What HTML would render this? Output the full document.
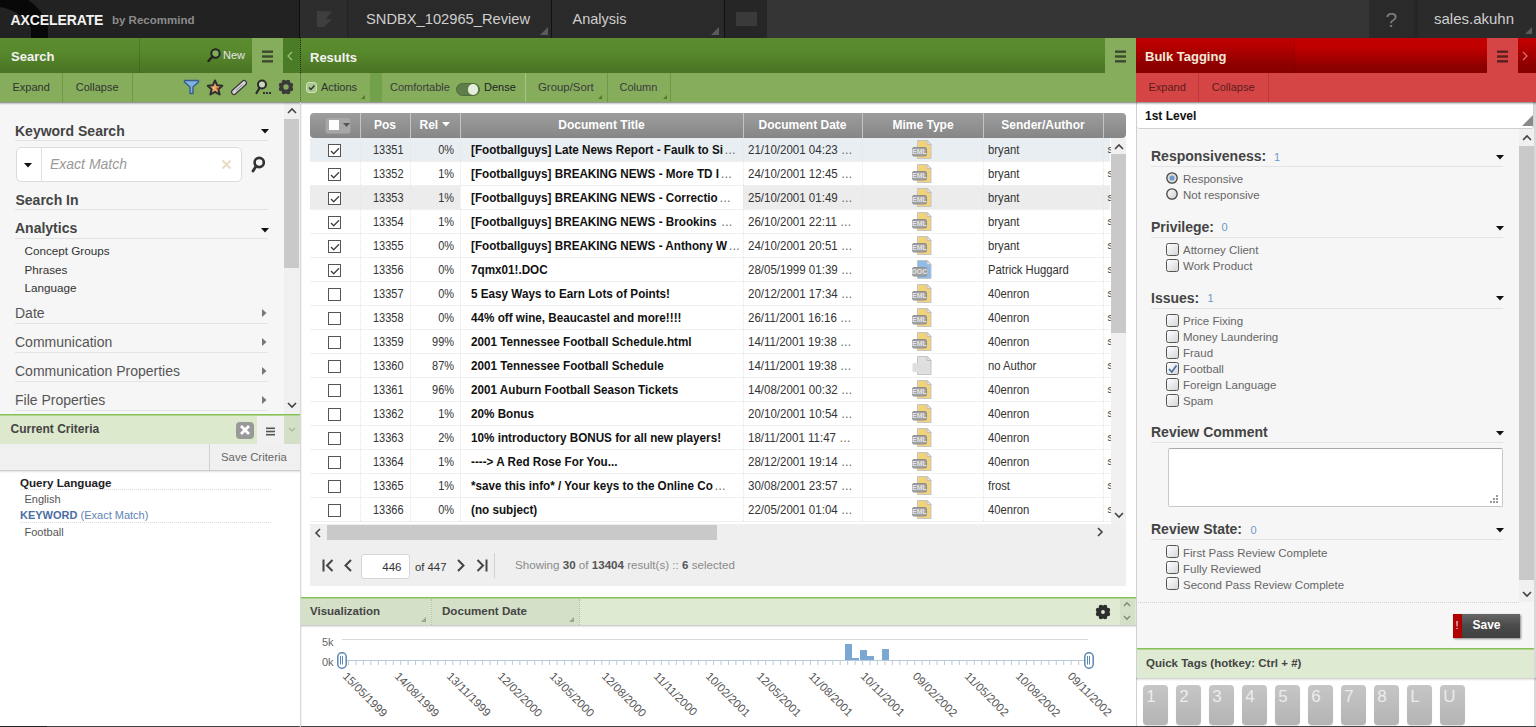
<!DOCTYPE html>
<html><head><meta charset="utf-8"><title>Axcelerate</title>
<style>
html,body{margin:0;padding:0}
body{width:1536px;height:727px;overflow:hidden;position:relative;background:#fff;font-family:"Liberation Sans",sans-serif;}
.a{position:absolute;box-sizing:border-box}
.t{white-space:nowrap}
.ghdr{background:linear-gradient(#5b8c2f,#588a2d 35%,#4a7323)}
.gtb{background:#85ad5c}
.rhdr{background:linear-gradient(#c20000,#c00000 12%,#8b0000 80%,#880000)}
.rtb{background:#d64545}
.cb{width:13px;height:13px;border:1.5px solid #555;background:#fff}
</style></head><body>
<div class="a" style="left:0px;top:0px;width:1536px;height:38px;background:#353535"></div>
<div class="a" style="left:0px;top:0px;width:299px;height:38px;background:#222"></div>
<svg class="a" style="left:0px;top:0px;" width="60" height="38" viewBox="0 0 60 38"><path d="M0,0 L28,0 Q43,9 48,27 L48,38 L31,38 L31,28 Q20,10 0,7 Z" fill="#080808"/></svg>
<div class="a t" style="left:10.5px;top:9.65px;font-size:14px;line-height:20px;color:#f2f2f2;font-weight:700;letter-spacing:-0.1px">AXCELERATE</div>
<div class="a t" style="left:112px;top:12.32px;font-size:11.5px;line-height:16px;color:#8c8c8c;font-weight:700;">by Recommind</div>
<div class="a" style="left:299px;top:0px;width:1px;height:38px;background:#0e0e0e"></div>
<div class="a" style="left:300px;top:0px;width:47px;height:38px;background:#2d2d2d"></div>
<svg class="a" style="left:316px;top:10px;" width="17" height="18" viewBox="0 0 17 18"><path d="M1,1 L16,1.5 L10,8.5 L16,9.5 L8,17 L1,17 Z" fill="#3e3e3e"/></svg>
<div class="a" style="left:347px;top:0px;width:1px;height:38px;background:#222"></div>
<div class="a" style="left:348px;top:0px;width:204px;height:38px;background:#2a2a2a"></div>
<div class="a t" style="left:366px;top:8.61px;font-size:14.7px;line-height:21px;color:#cfcfcf;font-weight:400;">SNDBX_102965_Review</div>
<svg class="a" style="left:540px;top:27px;" width="8" height="8" viewBox="0 0 8 8"><path d="M8,0 L8,8 L0,8 Z" fill="#5a5a5a"/></svg>
<div class="a" style="left:551px;top:0px;width:1px;height:38px;background:#111"></div>
<div class="a" style="left:552px;top:0px;width:172px;height:38px;background:#2a2a2a"></div>
<div class="a t" style="left:572.5px;top:9.18px;font-size:14.5px;line-height:20px;color:#cfcfcf;font-weight:400;">Analysis</div>
<svg class="a" style="left:711px;top:27px;" width="8" height="8" viewBox="0 0 8 8"><path d="M8,0 L8,8 L0,8 Z" fill="#5a5a5a"/></svg>
<div class="a" style="left:724px;top:0px;width:1px;height:38px;background:#111"></div>
<div class="a" style="left:725px;top:0px;width:42px;height:38px;background:#262626"></div>
<div class="a" style="left:736px;top:12px;width:21px;height:13.5px;background:#3a3a3a"></div>
<div class="a" style="left:1369px;top:0px;width:45px;height:38px;background:#2a2a2a"></div>
<div class="a t" style="left:1385.5px;top:5.42px;font-size:21px;line-height:29px;color:#7c7c7c;font-weight:400;">?</div>
<div class="a" style="left:1414px;top:0px;width:4px;height:38px;background:#262626"></div>
<div class="a" style="left:1418px;top:0px;width:118px;height:38px;background:#2b2b2b"></div>
<div class="a t" style="left:1434px;top:7.90px;font-size:15px;line-height:21px;color:#cfcfcf;font-weight:400;">sales.akuhn</div>
<svg class="a" style="left:1525px;top:27px;" width="7" height="7" viewBox="0 0 7 7"><path d="M7,0 L7,7 L0,7 Z" fill="#5a5a5a"/></svg>
<div class="a ghdr" style="left:0;top:38px;width:300px;height:35px"></div>
<div class="a" style="left:139px;top:38px;width:1px;height:35px;background:rgba(0,0,0,0.13)"></div>
<div class="a t" style="left:11px;top:47.80px;font-size:13px;line-height:18px;color:#f3f3f3;font-weight:700;">Search</div>
<svg class="a" style="left:207px;top:48px;" width="14" height="15" viewBox="0 0 14 15"><circle cx="8.5" cy="5.5" r="4.2" fill="#7fae5a" stroke="#222" stroke-width="2"/><path d="M5.5,8.5 L1.5,13" stroke="#222" stroke-width="2.4" stroke-linecap="round"/></svg>
<div class="a t" style="left:223px;top:47.69px;font-size:11px;line-height:15px;color:#e6e6e6;font-weight:400;">New</div>
<div class="a gtb" style="left:252px;top:38px;width:31px;height:35px"></div>
<svg class="a" style="left:262px;top:50px;" width="11" height="13" viewBox="0 0 11 13"><rect x="0" y="0.5" width="11" height="2.4" fill="#3d4a30"/><rect x="0" y="5.3" width="11" height="2.4" fill="#3d4a30"/><rect x="0" y="10.1" width="11" height="2.4" fill="#3d4a30"/></svg>
<div class="a" style="left:283px;top:38px;width:17px;height:35px;background:#4a7c27"></div>
<svg class="a" style="left:287px;top:51px;" width="6" height="10" viewBox="0 0 6 10"><path d="M5,1 L1,5 L5,9" fill="none" stroke="#9cc27a" stroke-width="1.2"/></svg>
<div class="a gtb" style="left:0;top:73px;width:300px;height:29px;"></div>
<div class="a t" style="left:12.5px;top:80.49px;font-size:11px;line-height:15px;color:#333;font-weight:400;">Expand</div>
<div class="a" style="left:62px;top:73px;width:1px;height:29px;background:#6e9a48"></div>
<div class="a t" style="left:75.8px;top:80.49px;font-size:11px;line-height:15px;color:#333;font-weight:400;">Collapse</div>
<div class="a" style="left:132px;top:73px;width:1px;height:29px;background:#6e9a48"></div>
<svg class="a" style="left:183px;top:79px;" width="17" height="16" viewBox="0 0 17 16"><path d="M1.5,1.5 L15.5,1.5 L15.5,3 L10,8 L10,14.5 L7,14.5 L7,8 L1.5,3 Z" fill="#7db3e2" stroke="#3b5d86" stroke-width="1.4" stroke-linejoin="round"/></svg>
<svg class="a" style="left:206px;top:79px;" width="18" height="17" viewBox="0 0 18 17"><path d="M9,1.5 L11.2,6.3 L16.3,6.8 L12.4,10.3 L13.6,15.5 L9,12.8 L4.4,15.5 L5.6,10.3 L1.7,6.8 L6.8,6.3 Z" fill="#e3a766" stroke="#2e2e2e" stroke-width="2" stroke-linejoin="round"/><circle cx="11.5" cy="9.5" r="1.1" fill="#e03030"/><circle cx="7.5" cy="9" r="0.9" fill="#f2d36a"/></svg>
<svg class="a" style="left:230px;top:79px;" width="18" height="17" viewBox="0 0 18 17"><path d="M4,13 L14,4" stroke="#3a3a3a" stroke-width="6" stroke-linecap="round"/><path d="M4,13 L14,4" stroke="#d4d4d4" stroke-width="3.6" stroke-linecap="round"/><path d="M6,11.5 L12.5,5.5" stroke="#8a8a8a" stroke-width="1"/></svg>
<svg class="a" style="left:255px;top:79px;" width="18" height="17" viewBox="0 0 18 17"><circle cx="7" cy="5.5" r="4" fill="#c8d8b8" stroke="#2a2a2a" stroke-width="2"/><path d="M4.5,9 L1.5,14" stroke="#2a2a2a" stroke-width="2.2" stroke-linecap="round"/><rect x="8" y="13" width="2" height="2" fill="#333"/><rect x="11" y="13" width="2" height="2" fill="#333"/><rect x="14" y="13" width="2" height="2" fill="#333"/></svg>
<svg class="a" style="left:278px;top:79px;" width="16" height="16" viewBox="0 0 16 16"><circle cx="8" cy="8" r="5.6" fill="#3a3a3a"/><circle cx="12.90" cy="10.03" r="2.3" fill="#3a3a3a"/><circle cx="10.03" cy="12.90" r="2.3" fill="#3a3a3a"/><circle cx="5.97" cy="12.90" r="2.3" fill="#3a3a3a"/><circle cx="3.10" cy="10.03" r="2.3" fill="#3a3a3a"/><circle cx="3.10" cy="5.97" r="2.3" fill="#3a3a3a"/><circle cx="5.97" cy="3.10" r="2.3" fill="#3a3a3a"/><circle cx="10.03" cy="3.10" r="2.3" fill="#3a3a3a"/><circle cx="12.90" cy="5.97" r="2.3" fill="#3a3a3a"/><circle cx="8" cy="8" r="2.7" fill="#85ad5c"/></svg>
<div class="a" style="left:0px;top:102px;width:300px;height:312px;background:#f6f6f6"></div>
<div class="a t" style="left:15px;top:121.15px;font-size:14px;line-height:20px;color:#444;font-weight:700;">Keyword Search</div>
<svg class="a" style="left:261px;top:129px;" width="8" height="5" viewBox="0 0 8 5"><path d="M0,0 L8,0 L4,4.5 Z" fill="#111"/></svg>
<div class="a" style="left:15px;top:140px;width:253px;height:1px;background:#e2e2e2"></div>
<div class="a" style="left:15.5px;top:146.5px;width:226px;height:35px;background:#fff;border:1px solid #dcdcdc;border-radius:5px"></div>
<div class="a" style="left:41px;top:147px;width:1px;height:34px;background:#e0e0e0"></div>
<svg class="a" style="left:24px;top:163px;" width="8" height="5" viewBox="0 0 8 5"><path d="M0,0 L8,0 L4,4.5 Z" fill="#111"/></svg>
<div class="a t" style="left:50px;top:153.65px;font-size:14px;line-height:20px;color:#999;font-weight:400;font-style:italic">Exact Match</div>
<svg class="a" style="left:221px;top:159px;" width="11" height="11" viewBox="0 0 11 11"><path d="M1.5,1.5 L9.5,9.5 M9.5,1.5 L1.5,9.5" stroke="#e9dcc2" stroke-width="2.1"/></svg>
<svg class="a" style="left:251px;top:156px;" width="14" height="17" viewBox="0 0 14 17"><circle cx="8.2" cy="6.5" r="4.6" fill="none" stroke="#333" stroke-width="2.6"/><path d="M5.2,10 L2,15" stroke="#333" stroke-width="2.8" stroke-linecap="round"/></svg>
<div class="a t" style="left:15.5px;top:190.45px;font-size:14px;line-height:20px;color:#444;font-weight:700;">Search In</div>
<div class="a" style="left:15px;top:209px;width:253px;height:1px;background:#e2e2e2"></div>
<div class="a t" style="left:15px;top:218.35px;font-size:14px;line-height:20px;color:#444;font-weight:700;">Analytics</div>
<svg class="a" style="left:261px;top:228px;" width="8" height="5" viewBox="0 0 8 5"><path d="M0,0 L8,0 L4,4.5 Z" fill="#111"/></svg>
<div class="a" style="left:15px;top:238px;width:253px;height:1px;background:#e2e2e2"></div>
<div class="a t" style="left:24.5px;top:243.35px;font-size:11.7px;line-height:16px;color:#333;font-weight:400;">Concept Groups</div>
<div class="a t" style="left:24.5px;top:261.85px;font-size:11.7px;line-height:16px;color:#333;font-weight:400;">Phrases</div>
<div class="a t" style="left:24.5px;top:280.15px;font-size:11.7px;line-height:16px;color:#333;font-weight:400;">Language</div>
<div class="a t" style="left:15px;top:303.25px;font-size:14px;line-height:20px;color:#555;font-weight:400;">Date</div>
<div class="a" style="left:15px;top:323px;width:253px;height:1px;background:#e4e4e4"></div>
<svg class="a" style="left:262px;top:309px;" width="5" height="8" viewBox="0 0 5 8"><path d="M0,0 L4.5,4 L0,8 Z" fill="#777"/></svg>
<div class="a t" style="left:15px;top:332.15px;font-size:14px;line-height:20px;color:#555;font-weight:400;">Communication</div>
<div class="a" style="left:15px;top:352px;width:253px;height:1px;background:#e4e4e4"></div>
<svg class="a" style="left:262px;top:338px;" width="5" height="8" viewBox="0 0 5 8"><path d="M0,0 L4.5,4 L0,8 Z" fill="#777"/></svg>
<div class="a t" style="left:15px;top:361.05px;font-size:14px;line-height:20px;color:#555;font-weight:400;">Communication Properties</div>
<div class="a" style="left:15px;top:381px;width:253px;height:1px;background:#e4e4e4"></div>
<svg class="a" style="left:262px;top:367px;" width="5" height="8" viewBox="0 0 5 8"><path d="M0,0 L4.5,4 L0,8 Z" fill="#777"/></svg>
<div class="a t" style="left:15px;top:389.95px;font-size:14px;line-height:20px;color:#555;font-weight:400;">File Properties</div>
<div class="a" style="left:15px;top:410px;width:253px;height:1px;background:#e4e4e4"></div>
<svg class="a" style="left:262px;top:396px;" width="5" height="8" viewBox="0 0 5 8"><path d="M0,0 L4.5,4 L0,8 Z" fill="#777"/></svg>
<div class="a" style="left:284px;top:102px;width:16px;height:312px;background:#f0f0f0"></div>
<svg class="a" style="left:287px;top:107px;" width="10" height="7" viewBox="0 0 10 7"><path d="M1,6 L5,2 L9,6" fill="none" stroke="#444" stroke-width="1.6"/></svg>
<div class="a" style="left:284px;top:119px;width:15px;height:149px;background:#c9c9c9"></div>
<svg class="a" style="left:287px;top:402px;" width="10" height="7" viewBox="0 0 10 7"><path d="M1,1 L5,5 L9,1" fill="none" stroke="#444" stroke-width="1.6"/></svg>
<div class="a" style="left:0px;top:414px;width:300px;height:1px;background:#86bf55"></div>
<div class="a" style="left:0px;top:415px;width:300px;height:1px;background:#b2d492"></div>
<div class="a" style="left:0px;top:416px;width:300px;height:28px;background:#dce9cd"></div>
<div class="a t" style="left:10.5px;top:420.74px;font-size:12px;line-height:17px;color:#444;font-weight:700;">Current Criteria</div>
<div class="a" style="left:236px;top:421.5px;width:18px;height:17.5px;background:#999;border-radius:4px"></div>
<svg class="a" style="left:239px;top:424px;" width="12" height="12" viewBox="0 0 12 12"><path d="M2,2 L10,10 M10,2 L2,10" stroke="#fff" stroke-width="2.8"/></svg>
<div class="a" style="left:257px;top:416px;width:27px;height:28px;background:#f1f1f1"></div>
<svg class="a" style="left:266px;top:427px;" width="9" height="9" viewBox="0 0 9 9"><rect x="0" y="0.5" width="9" height="1.6" fill="#555"/><rect x="0" y="3.7" width="9" height="1.6" fill="#555"/><rect x="0" y="6.9" width="9" height="1.6" fill="#555"/></svg>
<div class="a" style="left:284px;top:416px;width:16px;height:28px;background:#d3dfc6"></div>
<svg class="a" style="left:288px;top:427px;" width="8" height="6" viewBox="0 0 8 6"><path d="M1,1 L4,4 L7,1" fill="none" stroke="#aab49e" stroke-width="1.2"/></svg>
<div class="a" style="left:0;top:444px;width:300px;height:26px;background:#f0f0f0"></div>
<div class="a" style="left:209px;top:444px;width:1px;height:26px;background:#d0d0d0"></div>
<div class="a t" style="left:221px;top:449.05px;font-size:11.4px;line-height:16px;color:#666;font-weight:400;">Save Criteria</div>
<div class="a" style="left:0px;top:470px;width:300px;height:256px;background:#fff"></div>
<div class="a t" style="left:20px;top:474.58px;font-size:11.6px;line-height:16px;color:#222;font-weight:700;">Query Language</div>
<div class="a" style="left:20px;top:489px;width:251px;height:1px;border-top:1px dotted #d8d8d8"></div>
<div class="a t" style="left:24.5px;top:491.89px;font-size:11px;line-height:15px;color:#555;font-weight:400;">English</div>
<div class="a t" style="left:20px;top:507.89px;font-size:11px;line-height:15px;color:#555;font-weight:400;"><b style="color:#4a6ea3">KEYWORD</b> <span style="color:#6384b3">(Exact Match)</span></div>
<div class="a" style="left:20px;top:522px;width:251px;height:1px;border-top:1px dotted #d8d8d8"></div>
<div class="a t" style="left:24.5px;top:524.69px;font-size:11px;line-height:15px;color:#555;font-weight:400;">Football</div>
<div class="a" style="left:300px;top:102px;width:1px;height:625px;background:#dadada"></div>
<div class="a" style="left:301px;top:102px;width:1px;height:625px;background:#f2f2f2"></div>
<div class="a ghdr" style="left:301px;top:38px;width:804px;height:35px"></div>
<div class="a" style="left:300px;top:38px;width:1px;height:35px;background:#4f7f2a"></div>
<div class="a" style="left:300px;top:73px;width:1px;height:29px;background:#6f9a4a"></div>
<div class="a" style="left:300px;top:38px;width:1px;height:35px;border-left:1px dotted #1f2a18"></div>
<div class="a" style="left:300px;top:73px;width:1px;height:29px;border-left:1px dotted #54743f"></div>
<div class="a t" style="left:310px;top:48.70px;font-size:13px;line-height:18px;color:#f3f3f3;font-weight:700;">Results</div>
<div class="a gtb" style="left:1105px;top:38px;width:31px;height:35px"></div>
<svg class="a" style="left:1115px;top:50px;" width="11" height="13" viewBox="0 0 11 13"><rect x="0" y="0.5" width="11" height="2.4" fill="#3d4a30"/><rect x="0" y="5.3" width="11" height="2.4" fill="#3d4a30"/><rect x="0" y="10.1" width="11" height="2.4" fill="#3d4a30"/></svg>
<div class="a gtb" style="left:301px;top:73px;width:835px;height:29px;"></div>
<div class="a" style="left:306px;top:82px;width:11px;height:11px;background:#a9c98e;border:1px solid #cfe0c0;border-radius:3px"></div>
<svg class="a" style="left:307px;top:83px;" width="9" height="9" viewBox="0 0 9 9"><path d="M2,4.5 L4,6.5 L7.5,2.5" fill="none" stroke="#333" stroke-width="1.5"/></svg>
<div class="a t" style="left:321px;top:79.69px;font-size:11px;line-height:15px;color:#333;font-weight:400;">Actions</div>
<svg class="a" style="left:361px;top:95px;" width="4" height="4" viewBox="0 0 4 4"><path d="M4,0 L4,4 L0,4 Z" fill="#4f7a2c"/></svg>
<div class="a" style="left:370px;top:73px;width:12px;height:29px;background:#73a04a"></div>
<div class="a t" style="left:390px;top:79.69px;font-size:11px;line-height:15px;color:#3b3b3b;font-weight:400;">Comfortable</div>
<div class="a" style="left:456px;top:82.5px;width:24px;height:13px;background:#5f7d48;border-radius:7px;border:1px solid #4e6b3a"></div>
<div class="a" style="left:467.5px;top:84px;width:10.5px;height:10.5px;background:#e6eedd;border-radius:6px"></div>
<div class="a t" style="left:484px;top:79.69px;font-size:11px;line-height:15px;color:#222;font-weight:400;">Dense</div>
<div class="a" style="left:525px;top:73px;width:1px;height:29px;background:#a5c688"></div>
<div class="a t" style="left:538px;top:79.05px;font-size:11.4px;line-height:16px;color:#3b3b3b;font-weight:400;">Group/Sort</div>
<svg class="a" style="left:598px;top:95px;" width="4" height="4" viewBox="0 0 4 4"><path d="M4,0 L4,4 L0,4 Z" fill="#4f7a2c"/></svg>
<div class="a" style="left:607px;top:73px;width:1px;height:29px;background:#6e9a48"></div>
<div class="a t" style="left:619.5px;top:79.69px;font-size:11px;line-height:15px;color:#3b3b3b;font-weight:400;">Column</div>
<svg class="a" style="left:663px;top:95px;" width="4" height="4" viewBox="0 0 4 4"><path d="M4,0 L4,4 L0,4 Z" fill="#4f7a2c"/></svg>
<div class="a" style="left:670px;top:73px;width:1px;height:29px;background:#6e9a48"></div>
<div class="a" style="left:310px;top:113px;width:816px;height:25px;background:linear-gradient(#9d9d9d,#868686);border-radius:4px"></div>
<div class="a" style="left:360px;top:113px;width:1px;height:25px;background:#c4c4c4"></div>
<div class="a" style="left:410px;top:113px;width:1px;height:25px;background:#c4c4c4"></div>
<div class="a" style="left:460px;top:113px;width:1px;height:25px;background:#c4c4c4"></div>
<div class="a" style="left:743px;top:113px;width:1px;height:25px;background:#c4c4c4"></div>
<div class="a" style="left:862px;top:113px;width:1px;height:25px;background:#c4c4c4"></div>
<div class="a" style="left:983px;top:113px;width:1px;height:25px;background:#c4c4c4"></div>
<div class="a" style="left:1103px;top:113px;width:1px;height:25px;background:#c4c4c4"></div>
<div class="a" style="left:325px;top:117px;width:26px;height:17px;background:#a7a7a7;border:1px solid #999;border-radius:3px"></div>
<div class="a" style="left:329px;top:120px;width:10px;height:10px;background:#fff"></div>
<svg class="a" style="left:343px;top:123px;" width="7" height="5" viewBox="0 0 7 5"><path d="M0,0 L7,0 L3.5,4 Z" fill="#555"/></svg>
<div class="a t" style="left:374px;top:116.64px;font-size:12px;line-height:17px;color:#fff;font-weight:700;">Pos</div>
<div class="a t" style="left:419.5px;top:116.64px;font-size:12px;line-height:17px;color:#fff;font-weight:700;">Rel</div>
<svg class="a" style="left:442px;top:122px;" width="8" height="5" viewBox="0 0 8 5"><path d="M0,0 L8,0 L4,4.5 Z" fill="#fff"/></svg>
<div class="a t" style="left:301.5px;width:600px;text-align:center;top:116.64px;font-size:12px;line-height:17px;color:#fff;font-weight:700;">Document Title</div>
<div class="a t" style="left:502.5px;width:600px;text-align:center;top:116.64px;font-size:12px;line-height:17px;color:#fff;font-weight:700;">Document Date</div>
<div class="a t" style="left:623px;width:600px;text-align:center;top:116.64px;font-size:12px;line-height:17px;color:#fff;font-weight:700;">Mime Type</div>
<div class="a t" style="left:743px;width:600px;text-align:center;top:116.64px;font-size:12px;line-height:17px;color:#fff;font-weight:700;">Sender/Author</div>
<div class="a" style="left:310px;top:138px;width:800px;height:24px;background:#e9eef3"></div>
<div class="a" style="left:310px;top:161px;width:800px;height:1px;background:#f0f0f0"></div>
<div class="a" style="left:360px;top:138px;width:1px;height:23px;border-left:1px dotted #e6e6e6"></div>
<div class="a" style="left:410px;top:138px;width:1px;height:23px;border-left:1px dotted #e6e6e6"></div>
<div class="a" style="left:460px;top:138px;width:1px;height:23px;border-left:1px dotted #e6e6e6"></div>
<div class="a" style="left:743px;top:138px;width:1px;height:23px;border-left:1px dotted #e6e6e6"></div>
<div class="a" style="left:862px;top:138px;width:1px;height:23px;border-left:1px dotted #e6e6e6"></div>
<div class="a" style="left:983px;top:138px;width:1px;height:23px;border-left:1px dotted #e6e6e6"></div>
<div class="a" style="left:1103px;top:138px;width:1px;height:23px;border-left:1px dotted #e6e6e6"></div>
<div class="a cb" style="left:328px;top:144px"></div>
<svg class="a" style="left:330px;top:146px;" width="10" height="10" viewBox="0 0 10 10"><path d="M1,5 L3.7,7.8 L9,2.3" fill="none" stroke="#444" stroke-width="1.4"/></svg>
<div class="a t" style="left:372.5px;top:141.50px;font-size:12.4px;line-height:17px;color:#333;font-weight:400;transform:scaleX(0.885);transform-origin:0 0">13351</div>
<div class="a t" style="left:154px;width:300px;text-align:right;top:141.50px;font-size:12.4px;line-height:17px;color:#333;font-weight:400;transform:scaleX(0.885);transform-origin:100% 0">0%</div>
<div class="a t" style="left:470.5px;top:140.97px;font-size:12.5px;line-height:18px;color:#111;font-weight:700;transform:scaleX(0.935);transform-origin:0 0">[Footballguys] Late News Report - Faulk to Si<span style="font-weight:400;color:#666;margin-left:1.5px">…</span></div>
<div class="a t" style="left:747.5px;top:141.50px;font-size:12.4px;line-height:17px;color:#333;font-weight:400;transform:scaleX(0.93);transform-origin:0 0">21/10/2001 04:23 <span style="color:#666">…</span></div>
<svg class="a" style="left:912px;top:140px" width="20" height="20" viewBox="0 0 20 20"><path d="M5.5,0.5 L15,0.5 L19,4.5 L19,18.5 L5.5,18.5 Z" fill="#f2d27a" stroke="#c4c4c4" stroke-width="1"/><path d="M15,0.5 L15,4.5 L19,4.5 Z" fill="#e6e6e6" stroke="#b8b8b8" stroke-width="0.8"/><rect x="0.5" y="7.5" width="14" height="8.5" rx="1.5" fill="#a3a3a3" stroke="#8e8e8e" stroke-width="1"/><text x="7.5" y="14.3" font-size="7" font-weight="700" text-anchor="middle" fill="#e4e4e4" font-family="Liberation Sans">EML</text></svg>
<div class="a t" style="left:987.5px;top:141.50px;font-size:12.4px;line-height:17px;color:#333;font-weight:400;transform:scaleX(0.91);transform-origin:0 0">bryant</div>
<div class="a" style="left:1107px;top:138px;width:4px;height:23px;overflow:hidden"><div class="a t" style="left:0.5px;top:4px;font-size:11px;line-height:15px;color:#444">s</div></div>
<div class="a" style="left:310px;top:185px;width:800px;height:1px;background:#f0f0f0"></div>
<div class="a" style="left:360px;top:162px;width:1px;height:23px;border-left:1px dotted #e6e6e6"></div>
<div class="a" style="left:410px;top:162px;width:1px;height:23px;border-left:1px dotted #e6e6e6"></div>
<div class="a" style="left:460px;top:162px;width:1px;height:23px;border-left:1px dotted #e6e6e6"></div>
<div class="a" style="left:743px;top:162px;width:1px;height:23px;border-left:1px dotted #e6e6e6"></div>
<div class="a" style="left:862px;top:162px;width:1px;height:23px;border-left:1px dotted #e6e6e6"></div>
<div class="a" style="left:983px;top:162px;width:1px;height:23px;border-left:1px dotted #e6e6e6"></div>
<div class="a" style="left:1103px;top:162px;width:1px;height:23px;border-left:1px dotted #e6e6e6"></div>
<div class="a cb" style="left:328px;top:168px"></div>
<svg class="a" style="left:330px;top:170px;" width="10" height="10" viewBox="0 0 10 10"><path d="M1,5 L3.7,7.8 L9,2.3" fill="none" stroke="#444" stroke-width="1.4"/></svg>
<div class="a t" style="left:372.5px;top:165.50px;font-size:12.4px;line-height:17px;color:#333;font-weight:400;transform:scaleX(0.885);transform-origin:0 0">13352</div>
<div class="a t" style="left:154px;width:300px;text-align:right;top:165.50px;font-size:12.4px;line-height:17px;color:#333;font-weight:400;transform:scaleX(0.885);transform-origin:100% 0">1%</div>
<div class="a t" style="left:470.5px;top:164.97px;font-size:12.5px;line-height:18px;color:#111;font-weight:700;transform:scaleX(0.935);transform-origin:0 0">[Footballguys] BREAKING NEWS - More TD I<span style="font-weight:400;color:#666;margin-left:1.5px">…</span></div>
<div class="a t" style="left:747.5px;top:165.50px;font-size:12.4px;line-height:17px;color:#333;font-weight:400;transform:scaleX(0.93);transform-origin:0 0">24/10/2001 12:45 <span style="color:#666">…</span></div>
<svg class="a" style="left:912px;top:164px" width="20" height="20" viewBox="0 0 20 20"><path d="M5.5,0.5 L15,0.5 L19,4.5 L19,18.5 L5.5,18.5 Z" fill="#f2d27a" stroke="#c4c4c4" stroke-width="1"/><path d="M15,0.5 L15,4.5 L19,4.5 Z" fill="#e6e6e6" stroke="#b8b8b8" stroke-width="0.8"/><rect x="0.5" y="7.5" width="14" height="8.5" rx="1.5" fill="#a3a3a3" stroke="#8e8e8e" stroke-width="1"/><text x="7.5" y="14.3" font-size="7" font-weight="700" text-anchor="middle" fill="#e4e4e4" font-family="Liberation Sans">EML</text></svg>
<div class="a t" style="left:987.5px;top:165.50px;font-size:12.4px;line-height:17px;color:#333;font-weight:400;transform:scaleX(0.91);transform-origin:0 0">bryant</div>
<div class="a" style="left:1107px;top:162px;width:4px;height:23px;overflow:hidden"><div class="a t" style="left:0.5px;top:4px;font-size:11px;line-height:15px;color:#444">s</div></div>
<div class="a" style="left:310px;top:186px;width:150px;height:24px;background:#ececec"></div>
<div class="a" style="left:743px;top:186px;width:367px;height:24px;background:#ececec"></div>
<div class="a" style="left:310px;top:209px;width:800px;height:1px;background:#f0f0f0"></div>
<div class="a" style="left:360px;top:186px;width:1px;height:23px;border-left:1px dotted #e6e6e6"></div>
<div class="a" style="left:410px;top:186px;width:1px;height:23px;border-left:1px dotted #e6e6e6"></div>
<div class="a" style="left:460px;top:186px;width:1px;height:23px;border-left:1px dotted #e6e6e6"></div>
<div class="a" style="left:743px;top:186px;width:1px;height:23px;border-left:1px dotted #e6e6e6"></div>
<div class="a" style="left:862px;top:186px;width:1px;height:23px;border-left:1px dotted #e6e6e6"></div>
<div class="a" style="left:983px;top:186px;width:1px;height:23px;border-left:1px dotted #e6e6e6"></div>
<div class="a" style="left:1103px;top:186px;width:1px;height:23px;border-left:1px dotted #e6e6e6"></div>
<div class="a cb" style="left:328px;top:192px"></div>
<svg class="a" style="left:330px;top:194px;" width="10" height="10" viewBox="0 0 10 10"><path d="M1,5 L3.7,7.8 L9,2.3" fill="none" stroke="#444" stroke-width="1.4"/></svg>
<div class="a t" style="left:372.5px;top:189.50px;font-size:12.4px;line-height:17px;color:#333;font-weight:400;transform:scaleX(0.885);transform-origin:0 0">13353</div>
<div class="a t" style="left:154px;width:300px;text-align:right;top:189.50px;font-size:12.4px;line-height:17px;color:#333;font-weight:400;transform:scaleX(0.885);transform-origin:100% 0">1%</div>
<div class="a t" style="left:470.5px;top:188.97px;font-size:12.5px;line-height:18px;color:#111;font-weight:700;transform:scaleX(0.935);transform-origin:0 0">[Footballguys] BREAKING NEWS - Correctio<span style="font-weight:400;color:#666;margin-left:1.5px">…</span></div>
<div class="a t" style="left:747.5px;top:189.50px;font-size:12.4px;line-height:17px;color:#333;font-weight:400;transform:scaleX(0.93);transform-origin:0 0">25/10/2001 01:49 <span style="color:#666">…</span></div>
<svg class="a" style="left:912px;top:188px" width="20" height="20" viewBox="0 0 20 20"><path d="M5.5,0.5 L15,0.5 L19,4.5 L19,18.5 L5.5,18.5 Z" fill="#f2d27a" stroke="#c4c4c4" stroke-width="1"/><path d="M15,0.5 L15,4.5 L19,4.5 Z" fill="#e6e6e6" stroke="#b8b8b8" stroke-width="0.8"/><rect x="0.5" y="7.5" width="14" height="8.5" rx="1.5" fill="#a3a3a3" stroke="#8e8e8e" stroke-width="1"/><text x="7.5" y="14.3" font-size="7" font-weight="700" text-anchor="middle" fill="#e4e4e4" font-family="Liberation Sans">EML</text></svg>
<div class="a t" style="left:987.5px;top:189.50px;font-size:12.4px;line-height:17px;color:#333;font-weight:400;transform:scaleX(0.91);transform-origin:0 0">bryant</div>
<div class="a" style="left:1107px;top:186px;width:4px;height:23px;overflow:hidden"><div class="a t" style="left:0.5px;top:4px;font-size:11px;line-height:15px;color:#444">s</div></div>
<div class="a" style="left:310px;top:233px;width:800px;height:1px;background:#f0f0f0"></div>
<div class="a" style="left:360px;top:210px;width:1px;height:23px;border-left:1px dotted #e6e6e6"></div>
<div class="a" style="left:410px;top:210px;width:1px;height:23px;border-left:1px dotted #e6e6e6"></div>
<div class="a" style="left:460px;top:210px;width:1px;height:23px;border-left:1px dotted #e6e6e6"></div>
<div class="a" style="left:743px;top:210px;width:1px;height:23px;border-left:1px dotted #e6e6e6"></div>
<div class="a" style="left:862px;top:210px;width:1px;height:23px;border-left:1px dotted #e6e6e6"></div>
<div class="a" style="left:983px;top:210px;width:1px;height:23px;border-left:1px dotted #e6e6e6"></div>
<div class="a" style="left:1103px;top:210px;width:1px;height:23px;border-left:1px dotted #e6e6e6"></div>
<div class="a cb" style="left:328px;top:216px"></div>
<svg class="a" style="left:330px;top:218px;" width="10" height="10" viewBox="0 0 10 10"><path d="M1,5 L3.7,7.8 L9,2.3" fill="none" stroke="#444" stroke-width="1.4"/></svg>
<div class="a t" style="left:372.5px;top:213.50px;font-size:12.4px;line-height:17px;color:#333;font-weight:400;transform:scaleX(0.885);transform-origin:0 0">13354</div>
<div class="a t" style="left:154px;width:300px;text-align:right;top:213.50px;font-size:12.4px;line-height:17px;color:#333;font-weight:400;transform:scaleX(0.885);transform-origin:100% 0">1%</div>
<div class="a t" style="left:470.5px;top:212.97px;font-size:12.5px;line-height:18px;color:#111;font-weight:700;transform:scaleX(0.935);transform-origin:0 0">[Footballguys] BREAKING NEWS - Brookins <span style="font-weight:400;color:#666;margin-left:1.5px">…</span></div>
<div class="a t" style="left:747.5px;top:213.50px;font-size:12.4px;line-height:17px;color:#333;font-weight:400;transform:scaleX(0.93);transform-origin:0 0">26/10/2001 22:11 <span style="color:#666">…</span></div>
<svg class="a" style="left:912px;top:212px" width="20" height="20" viewBox="0 0 20 20"><path d="M5.5,0.5 L15,0.5 L19,4.5 L19,18.5 L5.5,18.5 Z" fill="#f2d27a" stroke="#c4c4c4" stroke-width="1"/><path d="M15,0.5 L15,4.5 L19,4.5 Z" fill="#e6e6e6" stroke="#b8b8b8" stroke-width="0.8"/><rect x="0.5" y="7.5" width="14" height="8.5" rx="1.5" fill="#a3a3a3" stroke="#8e8e8e" stroke-width="1"/><text x="7.5" y="14.3" font-size="7" font-weight="700" text-anchor="middle" fill="#e4e4e4" font-family="Liberation Sans">EML</text></svg>
<div class="a t" style="left:987.5px;top:213.50px;font-size:12.4px;line-height:17px;color:#333;font-weight:400;transform:scaleX(0.91);transform-origin:0 0">bryant</div>
<div class="a" style="left:1107px;top:210px;width:4px;height:23px;overflow:hidden"><div class="a t" style="left:0.5px;top:4px;font-size:11px;line-height:15px;color:#444">s</div></div>
<div class="a" style="left:310px;top:257px;width:800px;height:1px;background:#f0f0f0"></div>
<div class="a" style="left:360px;top:234px;width:1px;height:23px;border-left:1px dotted #e6e6e6"></div>
<div class="a" style="left:410px;top:234px;width:1px;height:23px;border-left:1px dotted #e6e6e6"></div>
<div class="a" style="left:460px;top:234px;width:1px;height:23px;border-left:1px dotted #e6e6e6"></div>
<div class="a" style="left:743px;top:234px;width:1px;height:23px;border-left:1px dotted #e6e6e6"></div>
<div class="a" style="left:862px;top:234px;width:1px;height:23px;border-left:1px dotted #e6e6e6"></div>
<div class="a" style="left:983px;top:234px;width:1px;height:23px;border-left:1px dotted #e6e6e6"></div>
<div class="a" style="left:1103px;top:234px;width:1px;height:23px;border-left:1px dotted #e6e6e6"></div>
<div class="a cb" style="left:328px;top:240px"></div>
<svg class="a" style="left:330px;top:242px;" width="10" height="10" viewBox="0 0 10 10"><path d="M1,5 L3.7,7.8 L9,2.3" fill="none" stroke="#444" stroke-width="1.4"/></svg>
<div class="a t" style="left:372.5px;top:237.50px;font-size:12.4px;line-height:17px;color:#333;font-weight:400;transform:scaleX(0.885);transform-origin:0 0">13355</div>
<div class="a t" style="left:154px;width:300px;text-align:right;top:237.50px;font-size:12.4px;line-height:17px;color:#333;font-weight:400;transform:scaleX(0.885);transform-origin:100% 0">0%</div>
<div class="a t" style="left:470.5px;top:236.97px;font-size:12.5px;line-height:18px;color:#111;font-weight:700;transform:scaleX(0.935);transform-origin:0 0">[Footballguys] BREAKING NEWS - Anthony W<span style="font-weight:400;color:#666;margin-left:1.5px">…</span></div>
<div class="a t" style="left:747.5px;top:237.50px;font-size:12.4px;line-height:17px;color:#333;font-weight:400;transform:scaleX(0.93);transform-origin:0 0">24/10/2001 20:51 <span style="color:#666">…</span></div>
<svg class="a" style="left:912px;top:236px" width="20" height="20" viewBox="0 0 20 20"><path d="M5.5,0.5 L15,0.5 L19,4.5 L19,18.5 L5.5,18.5 Z" fill="#f2d27a" stroke="#c4c4c4" stroke-width="1"/><path d="M15,0.5 L15,4.5 L19,4.5 Z" fill="#e6e6e6" stroke="#b8b8b8" stroke-width="0.8"/><rect x="0.5" y="7.5" width="14" height="8.5" rx="1.5" fill="#a3a3a3" stroke="#8e8e8e" stroke-width="1"/><text x="7.5" y="14.3" font-size="7" font-weight="700" text-anchor="middle" fill="#e4e4e4" font-family="Liberation Sans">EML</text></svg>
<div class="a t" style="left:987.5px;top:237.50px;font-size:12.4px;line-height:17px;color:#333;font-weight:400;transform:scaleX(0.91);transform-origin:0 0">bryant</div>
<div class="a" style="left:1107px;top:234px;width:4px;height:23px;overflow:hidden"><div class="a t" style="left:0.5px;top:4px;font-size:11px;line-height:15px;color:#444">s</div></div>
<div class="a" style="left:310px;top:281px;width:800px;height:1px;background:#f0f0f0"></div>
<div class="a" style="left:360px;top:258px;width:1px;height:23px;border-left:1px dotted #e6e6e6"></div>
<div class="a" style="left:410px;top:258px;width:1px;height:23px;border-left:1px dotted #e6e6e6"></div>
<div class="a" style="left:460px;top:258px;width:1px;height:23px;border-left:1px dotted #e6e6e6"></div>
<div class="a" style="left:743px;top:258px;width:1px;height:23px;border-left:1px dotted #e6e6e6"></div>
<div class="a" style="left:862px;top:258px;width:1px;height:23px;border-left:1px dotted #e6e6e6"></div>
<div class="a" style="left:983px;top:258px;width:1px;height:23px;border-left:1px dotted #e6e6e6"></div>
<div class="a" style="left:1103px;top:258px;width:1px;height:23px;border-left:1px dotted #e6e6e6"></div>
<div class="a cb" style="left:328px;top:264px"></div>
<svg class="a" style="left:330px;top:266px;" width="10" height="10" viewBox="0 0 10 10"><path d="M1,5 L3.7,7.8 L9,2.3" fill="none" stroke="#444" stroke-width="1.4"/></svg>
<div class="a t" style="left:372.5px;top:261.50px;font-size:12.4px;line-height:17px;color:#333;font-weight:400;transform:scaleX(0.885);transform-origin:0 0">13356</div>
<div class="a t" style="left:154px;width:300px;text-align:right;top:261.50px;font-size:12.4px;line-height:17px;color:#333;font-weight:400;transform:scaleX(0.885);transform-origin:100% 0">0%</div>
<div class="a t" style="left:470.5px;top:260.97px;font-size:12.5px;line-height:18px;color:#111;font-weight:700;transform:scaleX(0.935);transform-origin:0 0">7qmx01!.DOC</div>
<div class="a t" style="left:747.5px;top:261.50px;font-size:12.4px;line-height:17px;color:#333;font-weight:400;transform:scaleX(0.93);transform-origin:0 0">28/05/1999 01:39 <span style="color:#666">…</span></div>
<svg class="a" style="left:912px;top:260px" width="20" height="20" viewBox="0 0 20 20"><path d="M5.5,0.5 L15,0.5 L19,4.5 L19,18.5 L5.5,18.5 Z" fill="#8fbbe8" stroke="#c4c4c4" stroke-width="1"/><path d="M15,0.5 L15,4.5 L19,4.5 Z" fill="#e6e6e6" stroke="#b8b8b8" stroke-width="0.8"/><rect x="0.5" y="7.5" width="14" height="8.5" rx="1.5" fill="#a3a3a3" stroke="#8e8e8e" stroke-width="1"/><text x="7.5" y="14.3" font-size="7" font-weight="700" text-anchor="middle" fill="#e4e4e4" font-family="Liberation Sans">DOC</text></svg>
<div class="a t" style="left:987.5px;top:261.50px;font-size:12.4px;line-height:17px;color:#333;font-weight:400;transform:scaleX(0.91);transform-origin:0 0">Patrick Huggard</div>
<div class="a" style="left:1107px;top:258px;width:4px;height:23px;overflow:hidden"><div class="a t" style="left:0.5px;top:4px;font-size:11px;line-height:15px;color:#444">s</div></div>
<div class="a" style="left:310px;top:305px;width:800px;height:1px;background:#f0f0f0"></div>
<div class="a" style="left:360px;top:282px;width:1px;height:23px;border-left:1px dotted #e6e6e6"></div>
<div class="a" style="left:410px;top:282px;width:1px;height:23px;border-left:1px dotted #e6e6e6"></div>
<div class="a" style="left:460px;top:282px;width:1px;height:23px;border-left:1px dotted #e6e6e6"></div>
<div class="a" style="left:743px;top:282px;width:1px;height:23px;border-left:1px dotted #e6e6e6"></div>
<div class="a" style="left:862px;top:282px;width:1px;height:23px;border-left:1px dotted #e6e6e6"></div>
<div class="a" style="left:983px;top:282px;width:1px;height:23px;border-left:1px dotted #e6e6e6"></div>
<div class="a" style="left:1103px;top:282px;width:1px;height:23px;border-left:1px dotted #e6e6e6"></div>
<div class="a cb" style="left:328px;top:288px"></div>
<div class="a t" style="left:372.5px;top:285.50px;font-size:12.4px;line-height:17px;color:#333;font-weight:400;transform:scaleX(0.885);transform-origin:0 0">13357</div>
<div class="a t" style="left:154px;width:300px;text-align:right;top:285.50px;font-size:12.4px;line-height:17px;color:#333;font-weight:400;transform:scaleX(0.885);transform-origin:100% 0">0%</div>
<div class="a t" style="left:470.5px;top:284.97px;font-size:12.5px;line-height:18px;color:#111;font-weight:700;transform:scaleX(0.935);transform-origin:0 0">5 Easy Ways to Earn Lots of Points!</div>
<div class="a t" style="left:747.5px;top:285.50px;font-size:12.4px;line-height:17px;color:#333;font-weight:400;transform:scaleX(0.93);transform-origin:0 0">20/12/2001 17:34 <span style="color:#666">…</span></div>
<svg class="a" style="left:912px;top:284px" width="20" height="20" viewBox="0 0 20 20"><path d="M5.5,0.5 L15,0.5 L19,4.5 L19,18.5 L5.5,18.5 Z" fill="#f2d27a" stroke="#c4c4c4" stroke-width="1"/><path d="M15,0.5 L15,4.5 L19,4.5 Z" fill="#e6e6e6" stroke="#b8b8b8" stroke-width="0.8"/><rect x="0.5" y="7.5" width="14" height="8.5" rx="1.5" fill="#a3a3a3" stroke="#8e8e8e" stroke-width="1"/><text x="7.5" y="14.3" font-size="7" font-weight="700" text-anchor="middle" fill="#e4e4e4" font-family="Liberation Sans">EML</text></svg>
<div class="a t" style="left:987.5px;top:285.50px;font-size:12.4px;line-height:17px;color:#333;font-weight:400;transform:scaleX(0.91);transform-origin:0 0">40enron</div>
<div class="a" style="left:1107px;top:282px;width:4px;height:23px;overflow:hidden"><div class="a t" style="left:0.5px;top:4px;font-size:11px;line-height:15px;color:#444">s</div></div>
<div class="a" style="left:310px;top:329px;width:800px;height:1px;background:#f0f0f0"></div>
<div class="a" style="left:360px;top:306px;width:1px;height:23px;border-left:1px dotted #e6e6e6"></div>
<div class="a" style="left:410px;top:306px;width:1px;height:23px;border-left:1px dotted #e6e6e6"></div>
<div class="a" style="left:460px;top:306px;width:1px;height:23px;border-left:1px dotted #e6e6e6"></div>
<div class="a" style="left:743px;top:306px;width:1px;height:23px;border-left:1px dotted #e6e6e6"></div>
<div class="a" style="left:862px;top:306px;width:1px;height:23px;border-left:1px dotted #e6e6e6"></div>
<div class="a" style="left:983px;top:306px;width:1px;height:23px;border-left:1px dotted #e6e6e6"></div>
<div class="a" style="left:1103px;top:306px;width:1px;height:23px;border-left:1px dotted #e6e6e6"></div>
<div class="a cb" style="left:328px;top:312px"></div>
<div class="a t" style="left:372.5px;top:309.50px;font-size:12.4px;line-height:17px;color:#333;font-weight:400;transform:scaleX(0.885);transform-origin:0 0">13358</div>
<div class="a t" style="left:154px;width:300px;text-align:right;top:309.50px;font-size:12.4px;line-height:17px;color:#333;font-weight:400;transform:scaleX(0.885);transform-origin:100% 0">0%</div>
<div class="a t" style="left:470.5px;top:308.97px;font-size:12.5px;line-height:18px;color:#111;font-weight:700;transform:scaleX(0.935);transform-origin:0 0">44% off wine, Beaucastel and more!!!!</div>
<div class="a t" style="left:747.5px;top:309.50px;font-size:12.4px;line-height:17px;color:#333;font-weight:400;transform:scaleX(0.93);transform-origin:0 0">26/11/2001 16:16 <span style="color:#666">…</span></div>
<svg class="a" style="left:912px;top:308px" width="20" height="20" viewBox="0 0 20 20"><path d="M5.5,0.5 L15,0.5 L19,4.5 L19,18.5 L5.5,18.5 Z" fill="#f2d27a" stroke="#c4c4c4" stroke-width="1"/><path d="M15,0.5 L15,4.5 L19,4.5 Z" fill="#e6e6e6" stroke="#b8b8b8" stroke-width="0.8"/><rect x="0.5" y="7.5" width="14" height="8.5" rx="1.5" fill="#a3a3a3" stroke="#8e8e8e" stroke-width="1"/><text x="7.5" y="14.3" font-size="7" font-weight="700" text-anchor="middle" fill="#e4e4e4" font-family="Liberation Sans">EML</text></svg>
<div class="a t" style="left:987.5px;top:309.50px;font-size:12.4px;line-height:17px;color:#333;font-weight:400;transform:scaleX(0.91);transform-origin:0 0">40enron</div>
<div class="a" style="left:1107px;top:306px;width:4px;height:23px;overflow:hidden"><div class="a t" style="left:0.5px;top:4px;font-size:11px;line-height:15px;color:#444">s</div></div>
<div class="a" style="left:310px;top:353px;width:800px;height:1px;background:#f0f0f0"></div>
<div class="a" style="left:360px;top:330px;width:1px;height:23px;border-left:1px dotted #e6e6e6"></div>
<div class="a" style="left:410px;top:330px;width:1px;height:23px;border-left:1px dotted #e6e6e6"></div>
<div class="a" style="left:460px;top:330px;width:1px;height:23px;border-left:1px dotted #e6e6e6"></div>
<div class="a" style="left:743px;top:330px;width:1px;height:23px;border-left:1px dotted #e6e6e6"></div>
<div class="a" style="left:862px;top:330px;width:1px;height:23px;border-left:1px dotted #e6e6e6"></div>
<div class="a" style="left:983px;top:330px;width:1px;height:23px;border-left:1px dotted #e6e6e6"></div>
<div class="a" style="left:1103px;top:330px;width:1px;height:23px;border-left:1px dotted #e6e6e6"></div>
<div class="a cb" style="left:328px;top:336px"></div>
<div class="a t" style="left:372.5px;top:333.50px;font-size:12.4px;line-height:17px;color:#333;font-weight:400;transform:scaleX(0.885);transform-origin:0 0">13359</div>
<div class="a t" style="left:154px;width:300px;text-align:right;top:333.50px;font-size:12.4px;line-height:17px;color:#333;font-weight:400;transform:scaleX(0.885);transform-origin:100% 0">99%</div>
<div class="a t" style="left:470.5px;top:332.97px;font-size:12.5px;line-height:18px;color:#111;font-weight:700;transform:scaleX(0.935);transform-origin:0 0">2001 Tennessee Football Schedule.html</div>
<div class="a t" style="left:747.5px;top:333.50px;font-size:12.4px;line-height:17px;color:#333;font-weight:400;transform:scaleX(0.93);transform-origin:0 0">14/11/2001 19:38 <span style="color:#666">…</span></div>
<svg class="a" style="left:912px;top:332px" width="20" height="20" viewBox="0 0 20 20"><path d="M5.5,0.5 L15,0.5 L19,4.5 L19,18.5 L5.5,18.5 Z" fill="#f2d27a" stroke="#c4c4c4" stroke-width="1"/><path d="M15,0.5 L15,4.5 L19,4.5 Z" fill="#e6e6e6" stroke="#b8b8b8" stroke-width="0.8"/><rect x="0.5" y="7.5" width="14" height="8.5" rx="1.5" fill="#a3a3a3" stroke="#8e8e8e" stroke-width="1"/><text x="7.5" y="14.3" font-size="7" font-weight="700" text-anchor="middle" fill="#e4e4e4" font-family="Liberation Sans">EML</text></svg>
<div class="a t" style="left:987.5px;top:333.50px;font-size:12.4px;line-height:17px;color:#333;font-weight:400;transform:scaleX(0.91);transform-origin:0 0">40enron</div>
<div class="a" style="left:1107px;top:330px;width:4px;height:23px;overflow:hidden"><div class="a t" style="left:0.5px;top:4px;font-size:11px;line-height:15px;color:#444">s</div></div>
<div class="a" style="left:310px;top:377px;width:800px;height:1px;background:#f0f0f0"></div>
<div class="a" style="left:360px;top:354px;width:1px;height:23px;border-left:1px dotted #e6e6e6"></div>
<div class="a" style="left:410px;top:354px;width:1px;height:23px;border-left:1px dotted #e6e6e6"></div>
<div class="a" style="left:460px;top:354px;width:1px;height:23px;border-left:1px dotted #e6e6e6"></div>
<div class="a" style="left:743px;top:354px;width:1px;height:23px;border-left:1px dotted #e6e6e6"></div>
<div class="a" style="left:862px;top:354px;width:1px;height:23px;border-left:1px dotted #e6e6e6"></div>
<div class="a" style="left:983px;top:354px;width:1px;height:23px;border-left:1px dotted #e6e6e6"></div>
<div class="a" style="left:1103px;top:354px;width:1px;height:23px;border-left:1px dotted #e6e6e6"></div>
<div class="a cb" style="left:328px;top:360px"></div>
<div class="a t" style="left:372.5px;top:357.50px;font-size:12.4px;line-height:17px;color:#333;font-weight:400;transform:scaleX(0.885);transform-origin:0 0">13360</div>
<div class="a t" style="left:154px;width:300px;text-align:right;top:357.50px;font-size:12.4px;line-height:17px;color:#333;font-weight:400;transform:scaleX(0.885);transform-origin:100% 0">87%</div>
<div class="a t" style="left:470.5px;top:356.97px;font-size:12.5px;line-height:18px;color:#111;font-weight:700;transform:scaleX(0.935);transform-origin:0 0">2001 Tennessee Football Schedule</div>
<div class="a t" style="left:747.5px;top:357.50px;font-size:12.4px;line-height:17px;color:#333;font-weight:400;transform:scaleX(0.93);transform-origin:0 0">14/11/2001 19:38 <span style="color:#666">…</span></div>
<svg class="a" style="left:912px;top:356px" width="20" height="20" viewBox="0 0 20 20"><path d="M5.5,0.5 L15,0.5 L19,4.5 L19,18.5 L5.5,18.5 Z" fill="#e0e0e0" stroke="#c4c4c4" stroke-width="1"/><path d="M15,0.5 L15,4.5 L19,4.5 Z" fill="#e6e6e6" stroke="#b8b8b8" stroke-width="0.8"/><rect x="0.5" y="7" width="15" height="9" rx="1.5" fill="#dedede"/></svg>
<div class="a t" style="left:987.5px;top:357.50px;font-size:12.4px;line-height:17px;color:#333;font-weight:400;transform:scaleX(0.91);transform-origin:0 0">no Author</div>
<div class="a" style="left:1107px;top:354px;width:4px;height:23px;overflow:hidden"><div class="a t" style="left:0.5px;top:4px;font-size:11px;line-height:15px;color:#444">s</div></div>
<div class="a" style="left:310px;top:401px;width:800px;height:1px;background:#f0f0f0"></div>
<div class="a" style="left:360px;top:378px;width:1px;height:23px;border-left:1px dotted #e6e6e6"></div>
<div class="a" style="left:410px;top:378px;width:1px;height:23px;border-left:1px dotted #e6e6e6"></div>
<div class="a" style="left:460px;top:378px;width:1px;height:23px;border-left:1px dotted #e6e6e6"></div>
<div class="a" style="left:743px;top:378px;width:1px;height:23px;border-left:1px dotted #e6e6e6"></div>
<div class="a" style="left:862px;top:378px;width:1px;height:23px;border-left:1px dotted #e6e6e6"></div>
<div class="a" style="left:983px;top:378px;width:1px;height:23px;border-left:1px dotted #e6e6e6"></div>
<div class="a" style="left:1103px;top:378px;width:1px;height:23px;border-left:1px dotted #e6e6e6"></div>
<div class="a cb" style="left:328px;top:384px"></div>
<div class="a t" style="left:372.5px;top:381.50px;font-size:12.4px;line-height:17px;color:#333;font-weight:400;transform:scaleX(0.885);transform-origin:0 0">13361</div>
<div class="a t" style="left:154px;width:300px;text-align:right;top:381.50px;font-size:12.4px;line-height:17px;color:#333;font-weight:400;transform:scaleX(0.885);transform-origin:100% 0">96%</div>
<div class="a t" style="left:470.5px;top:380.97px;font-size:12.5px;line-height:18px;color:#111;font-weight:700;transform:scaleX(0.935);transform-origin:0 0">2001 Auburn Football Season Tickets</div>
<div class="a t" style="left:747.5px;top:381.50px;font-size:12.4px;line-height:17px;color:#333;font-weight:400;transform:scaleX(0.93);transform-origin:0 0">14/08/2001 00:32 <span style="color:#666">…</span></div>
<svg class="a" style="left:912px;top:380px" width="20" height="20" viewBox="0 0 20 20"><path d="M5.5,0.5 L15,0.5 L19,4.5 L19,18.5 L5.5,18.5 Z" fill="#f2d27a" stroke="#c4c4c4" stroke-width="1"/><path d="M15,0.5 L15,4.5 L19,4.5 Z" fill="#e6e6e6" stroke="#b8b8b8" stroke-width="0.8"/><rect x="0.5" y="7.5" width="14" height="8.5" rx="1.5" fill="#a3a3a3" stroke="#8e8e8e" stroke-width="1"/><text x="7.5" y="14.3" font-size="7" font-weight="700" text-anchor="middle" fill="#e4e4e4" font-family="Liberation Sans">EML</text></svg>
<div class="a t" style="left:987.5px;top:381.50px;font-size:12.4px;line-height:17px;color:#333;font-weight:400;transform:scaleX(0.91);transform-origin:0 0">40enron</div>
<div class="a" style="left:1107px;top:378px;width:4px;height:23px;overflow:hidden"><div class="a t" style="left:0.5px;top:4px;font-size:11px;line-height:15px;color:#444">s</div></div>
<div class="a" style="left:310px;top:425px;width:800px;height:1px;background:#f0f0f0"></div>
<div class="a" style="left:360px;top:402px;width:1px;height:23px;border-left:1px dotted #e6e6e6"></div>
<div class="a" style="left:410px;top:402px;width:1px;height:23px;border-left:1px dotted #e6e6e6"></div>
<div class="a" style="left:460px;top:402px;width:1px;height:23px;border-left:1px dotted #e6e6e6"></div>
<div class="a" style="left:743px;top:402px;width:1px;height:23px;border-left:1px dotted #e6e6e6"></div>
<div class="a" style="left:862px;top:402px;width:1px;height:23px;border-left:1px dotted #e6e6e6"></div>
<div class="a" style="left:983px;top:402px;width:1px;height:23px;border-left:1px dotted #e6e6e6"></div>
<div class="a" style="left:1103px;top:402px;width:1px;height:23px;border-left:1px dotted #e6e6e6"></div>
<div class="a cb" style="left:328px;top:408px"></div>
<div class="a t" style="left:372.5px;top:405.50px;font-size:12.4px;line-height:17px;color:#333;font-weight:400;transform:scaleX(0.885);transform-origin:0 0">13362</div>
<div class="a t" style="left:154px;width:300px;text-align:right;top:405.50px;font-size:12.4px;line-height:17px;color:#333;font-weight:400;transform:scaleX(0.885);transform-origin:100% 0">1%</div>
<div class="a t" style="left:470.5px;top:404.97px;font-size:12.5px;line-height:18px;color:#111;font-weight:700;transform:scaleX(0.935);transform-origin:0 0">20% Bonus</div>
<div class="a t" style="left:747.5px;top:405.50px;font-size:12.4px;line-height:17px;color:#333;font-weight:400;transform:scaleX(0.93);transform-origin:0 0">20/10/2001 10:54 <span style="color:#666">…</span></div>
<svg class="a" style="left:912px;top:404px" width="20" height="20" viewBox="0 0 20 20"><path d="M5.5,0.5 L15,0.5 L19,4.5 L19,18.5 L5.5,18.5 Z" fill="#f2d27a" stroke="#c4c4c4" stroke-width="1"/><path d="M15,0.5 L15,4.5 L19,4.5 Z" fill="#e6e6e6" stroke="#b8b8b8" stroke-width="0.8"/><rect x="0.5" y="7.5" width="14" height="8.5" rx="1.5" fill="#a3a3a3" stroke="#8e8e8e" stroke-width="1"/><text x="7.5" y="14.3" font-size="7" font-weight="700" text-anchor="middle" fill="#e4e4e4" font-family="Liberation Sans">EML</text></svg>
<div class="a t" style="left:987.5px;top:405.50px;font-size:12.4px;line-height:17px;color:#333;font-weight:400;transform:scaleX(0.91);transform-origin:0 0">40enron</div>
<div class="a" style="left:1107px;top:402px;width:4px;height:23px;overflow:hidden"><div class="a t" style="left:0.5px;top:4px;font-size:11px;line-height:15px;color:#444">s</div></div>
<div class="a" style="left:310px;top:449px;width:800px;height:1px;background:#f0f0f0"></div>
<div class="a" style="left:360px;top:426px;width:1px;height:23px;border-left:1px dotted #e6e6e6"></div>
<div class="a" style="left:410px;top:426px;width:1px;height:23px;border-left:1px dotted #e6e6e6"></div>
<div class="a" style="left:460px;top:426px;width:1px;height:23px;border-left:1px dotted #e6e6e6"></div>
<div class="a" style="left:743px;top:426px;width:1px;height:23px;border-left:1px dotted #e6e6e6"></div>
<div class="a" style="left:862px;top:426px;width:1px;height:23px;border-left:1px dotted #e6e6e6"></div>
<div class="a" style="left:983px;top:426px;width:1px;height:23px;border-left:1px dotted #e6e6e6"></div>
<div class="a" style="left:1103px;top:426px;width:1px;height:23px;border-left:1px dotted #e6e6e6"></div>
<div class="a cb" style="left:328px;top:432px"></div>
<div class="a t" style="left:372.5px;top:429.50px;font-size:12.4px;line-height:17px;color:#333;font-weight:400;transform:scaleX(0.885);transform-origin:0 0">13363</div>
<div class="a t" style="left:154px;width:300px;text-align:right;top:429.50px;font-size:12.4px;line-height:17px;color:#333;font-weight:400;transform:scaleX(0.885);transform-origin:100% 0">2%</div>
<div class="a t" style="left:470.5px;top:428.97px;font-size:12.5px;line-height:18px;color:#111;font-weight:700;transform:scaleX(0.935);transform-origin:0 0">10% introductory BONUS for all new players!</div>
<div class="a t" style="left:747.5px;top:429.50px;font-size:12.4px;line-height:17px;color:#333;font-weight:400;transform:scaleX(0.93);transform-origin:0 0">18/11/2001 11:47 <span style="color:#666">…</span></div>
<svg class="a" style="left:912px;top:428px" width="20" height="20" viewBox="0 0 20 20"><path d="M5.5,0.5 L15,0.5 L19,4.5 L19,18.5 L5.5,18.5 Z" fill="#f2d27a" stroke="#c4c4c4" stroke-width="1"/><path d="M15,0.5 L15,4.5 L19,4.5 Z" fill="#e6e6e6" stroke="#b8b8b8" stroke-width="0.8"/><rect x="0.5" y="7.5" width="14" height="8.5" rx="1.5" fill="#a3a3a3" stroke="#8e8e8e" stroke-width="1"/><text x="7.5" y="14.3" font-size="7" font-weight="700" text-anchor="middle" fill="#e4e4e4" font-family="Liberation Sans">EML</text></svg>
<div class="a t" style="left:987.5px;top:429.50px;font-size:12.4px;line-height:17px;color:#333;font-weight:400;transform:scaleX(0.91);transform-origin:0 0">40enron</div>
<div class="a" style="left:1107px;top:426px;width:4px;height:23px;overflow:hidden"><div class="a t" style="left:0.5px;top:4px;font-size:11px;line-height:15px;color:#444">s</div></div>
<div class="a" style="left:310px;top:473px;width:800px;height:1px;background:#f0f0f0"></div>
<div class="a" style="left:360px;top:450px;width:1px;height:23px;border-left:1px dotted #e6e6e6"></div>
<div class="a" style="left:410px;top:450px;width:1px;height:23px;border-left:1px dotted #e6e6e6"></div>
<div class="a" style="left:460px;top:450px;width:1px;height:23px;border-left:1px dotted #e6e6e6"></div>
<div class="a" style="left:743px;top:450px;width:1px;height:23px;border-left:1px dotted #e6e6e6"></div>
<div class="a" style="left:862px;top:450px;width:1px;height:23px;border-left:1px dotted #e6e6e6"></div>
<div class="a" style="left:983px;top:450px;width:1px;height:23px;border-left:1px dotted #e6e6e6"></div>
<div class="a" style="left:1103px;top:450px;width:1px;height:23px;border-left:1px dotted #e6e6e6"></div>
<div class="a cb" style="left:328px;top:456px"></div>
<div class="a t" style="left:372.5px;top:453.50px;font-size:12.4px;line-height:17px;color:#333;font-weight:400;transform:scaleX(0.885);transform-origin:0 0">13364</div>
<div class="a t" style="left:154px;width:300px;text-align:right;top:453.50px;font-size:12.4px;line-height:17px;color:#333;font-weight:400;transform:scaleX(0.885);transform-origin:100% 0">1%</div>
<div class="a t" style="left:470.5px;top:452.97px;font-size:12.5px;line-height:18px;color:#111;font-weight:700;transform:scaleX(0.935);transform-origin:0 0">----&gt; A Red Rose For You...</div>
<div class="a t" style="left:747.5px;top:453.50px;font-size:12.4px;line-height:17px;color:#333;font-weight:400;transform:scaleX(0.93);transform-origin:0 0">28/12/2001 19:14 <span style="color:#666">…</span></div>
<svg class="a" style="left:912px;top:452px" width="20" height="20" viewBox="0 0 20 20"><path d="M5.5,0.5 L15,0.5 L19,4.5 L19,18.5 L5.5,18.5 Z" fill="#f2d27a" stroke="#c4c4c4" stroke-width="1"/><path d="M15,0.5 L15,4.5 L19,4.5 Z" fill="#e6e6e6" stroke="#b8b8b8" stroke-width="0.8"/><rect x="0.5" y="7.5" width="14" height="8.5" rx="1.5" fill="#a3a3a3" stroke="#8e8e8e" stroke-width="1"/><text x="7.5" y="14.3" font-size="7" font-weight="700" text-anchor="middle" fill="#e4e4e4" font-family="Liberation Sans">EML</text></svg>
<div class="a t" style="left:987.5px;top:453.50px;font-size:12.4px;line-height:17px;color:#333;font-weight:400;transform:scaleX(0.91);transform-origin:0 0">40enron</div>
<div class="a" style="left:1107px;top:450px;width:4px;height:23px;overflow:hidden"><div class="a t" style="left:0.5px;top:4px;font-size:11px;line-height:15px;color:#444">s</div></div>
<div class="a" style="left:310px;top:497px;width:800px;height:1px;background:#f0f0f0"></div>
<div class="a" style="left:360px;top:474px;width:1px;height:23px;border-left:1px dotted #e6e6e6"></div>
<div class="a" style="left:410px;top:474px;width:1px;height:23px;border-left:1px dotted #e6e6e6"></div>
<div class="a" style="left:460px;top:474px;width:1px;height:23px;border-left:1px dotted #e6e6e6"></div>
<div class="a" style="left:743px;top:474px;width:1px;height:23px;border-left:1px dotted #e6e6e6"></div>
<div class="a" style="left:862px;top:474px;width:1px;height:23px;border-left:1px dotted #e6e6e6"></div>
<div class="a" style="left:983px;top:474px;width:1px;height:23px;border-left:1px dotted #e6e6e6"></div>
<div class="a" style="left:1103px;top:474px;width:1px;height:23px;border-left:1px dotted #e6e6e6"></div>
<div class="a cb" style="left:328px;top:480px"></div>
<div class="a t" style="left:372.5px;top:477.50px;font-size:12.4px;line-height:17px;color:#333;font-weight:400;transform:scaleX(0.885);transform-origin:0 0">13365</div>
<div class="a t" style="left:154px;width:300px;text-align:right;top:477.50px;font-size:12.4px;line-height:17px;color:#333;font-weight:400;transform:scaleX(0.885);transform-origin:100% 0">1%</div>
<div class="a t" style="left:470.5px;top:476.97px;font-size:12.5px;line-height:18px;color:#111;font-weight:700;transform:scaleX(0.935);transform-origin:0 0">*save this info* / Your keys to the Online Co<span style="font-weight:400;color:#666;margin-left:1.5px">…</span></div>
<div class="a t" style="left:747.5px;top:477.50px;font-size:12.4px;line-height:17px;color:#333;font-weight:400;transform:scaleX(0.93);transform-origin:0 0">30/08/2001 23:57 <span style="color:#666">…</span></div>
<svg class="a" style="left:912px;top:476px" width="20" height="20" viewBox="0 0 20 20"><path d="M5.5,0.5 L15,0.5 L19,4.5 L19,18.5 L5.5,18.5 Z" fill="#f2d27a" stroke="#c4c4c4" stroke-width="1"/><path d="M15,0.5 L15,4.5 L19,4.5 Z" fill="#e6e6e6" stroke="#b8b8b8" stroke-width="0.8"/><rect x="0.5" y="7.5" width="14" height="8.5" rx="1.5" fill="#a3a3a3" stroke="#8e8e8e" stroke-width="1"/><text x="7.5" y="14.3" font-size="7" font-weight="700" text-anchor="middle" fill="#e4e4e4" font-family="Liberation Sans">EML</text></svg>
<div class="a t" style="left:987.5px;top:477.50px;font-size:12.4px;line-height:17px;color:#333;font-weight:400;transform:scaleX(0.91);transform-origin:0 0">frost</div>
<div class="a" style="left:1107px;top:474px;width:4px;height:23px;overflow:hidden"><div class="a t" style="left:0.5px;top:4px;font-size:11px;line-height:15px;color:#444">s</div></div>
<div class="a" style="left:310px;top:521px;width:800px;height:1px;background:#f0f0f0"></div>
<div class="a" style="left:360px;top:498px;width:1px;height:23px;border-left:1px dotted #e6e6e6"></div>
<div class="a" style="left:410px;top:498px;width:1px;height:23px;border-left:1px dotted #e6e6e6"></div>
<div class="a" style="left:460px;top:498px;width:1px;height:23px;border-left:1px dotted #e6e6e6"></div>
<div class="a" style="left:743px;top:498px;width:1px;height:23px;border-left:1px dotted #e6e6e6"></div>
<div class="a" style="left:862px;top:498px;width:1px;height:23px;border-left:1px dotted #e6e6e6"></div>
<div class="a" style="left:983px;top:498px;width:1px;height:23px;border-left:1px dotted #e6e6e6"></div>
<div class="a" style="left:1103px;top:498px;width:1px;height:23px;border-left:1px dotted #e6e6e6"></div>
<div class="a cb" style="left:328px;top:504px"></div>
<div class="a t" style="left:372.5px;top:501.50px;font-size:12.4px;line-height:17px;color:#333;font-weight:400;transform:scaleX(0.885);transform-origin:0 0">13366</div>
<div class="a t" style="left:154px;width:300px;text-align:right;top:501.50px;font-size:12.4px;line-height:17px;color:#333;font-weight:400;transform:scaleX(0.885);transform-origin:100% 0">0%</div>
<div class="a t" style="left:470.5px;top:500.97px;font-size:12.5px;line-height:18px;color:#111;font-weight:700;transform:scaleX(0.935);transform-origin:0 0">(no subject)</div>
<div class="a t" style="left:747.5px;top:501.50px;font-size:12.4px;line-height:17px;color:#333;font-weight:400;transform:scaleX(0.93);transform-origin:0 0">22/05/2001 01:04 <span style="color:#666">…</span></div>
<svg class="a" style="left:912px;top:500px" width="20" height="20" viewBox="0 0 20 20"><path d="M5.5,0.5 L15,0.5 L19,4.5 L19,18.5 L5.5,18.5 Z" fill="#f2d27a" stroke="#c4c4c4" stroke-width="1"/><path d="M15,0.5 L15,4.5 L19,4.5 Z" fill="#e6e6e6" stroke="#b8b8b8" stroke-width="0.8"/><rect x="0.5" y="7.5" width="14" height="8.5" rx="1.5" fill="#a3a3a3" stroke="#8e8e8e" stroke-width="1"/><text x="7.5" y="14.3" font-size="7" font-weight="700" text-anchor="middle" fill="#e4e4e4" font-family="Liberation Sans">EML</text></svg>
<div class="a t" style="left:987.5px;top:501.50px;font-size:12.4px;line-height:17px;color:#333;font-weight:400;transform:scaleX(0.91);transform-origin:0 0">40enron</div>
<div class="a" style="left:1107px;top:498px;width:4px;height:23px;overflow:hidden"><div class="a t" style="left:0.5px;top:4px;font-size:11px;line-height:15px;color:#444">s</div></div>
<div class="a" style="left:1111px;top:138px;width:15px;height:386px;background:#f0f0f0"></div>
<svg class="a" style="left:1113.5px;top:143px;" width="10" height="7" viewBox="0 0 10 7"><path d="M1,6 L5,2 L9,6" fill="none" stroke="#444" stroke-width="1.6"/></svg>
<div class="a" style="left:1111px;top:154px;width:15px;height:179px;background:#c9c9c9"></div>
<svg class="a" style="left:1113.5px;top:512px;" width="10" height="7" viewBox="0 0 10 7"><path d="M1,1 L5,5 L9,1" fill="none" stroke="#444" stroke-width="1.6"/></svg>
<div class="a" style="left:310px;top:524px;width:816px;height:62px;background:#efefef"></div>
<div class="a" style="left:327px;top:525px;width:390px;height:15px;background:#c9c9c9"></div>
<svg class="a" style="left:314px;top:528px;" width="7" height="10" viewBox="0 0 7 10"><path d="M6,1 L2,5 L6,9" fill="none" stroke="#444" stroke-width="1.6"/></svg>
<svg class="a" style="left:1097px;top:527px;" width="7" height="10" viewBox="0 0 7 10"><path d="M1,1 L5,5 L1,9" fill="none" stroke="#444" stroke-width="1.6"/></svg>
<svg class="a" style="left:322px;top:559px;" width="12" height="13" viewBox="0 0 12 13"><path d="M1.5,0.5 L1.5,12.5" stroke="#444" stroke-width="2"/><path d="M10.5,1 L5,6.5 L10.5,12" fill="none" stroke="#444" stroke-width="2"/></svg>
<svg class="a" style="left:343px;top:559px;" width="10" height="13" viewBox="0 0 10 13"><path d="M8,1 L2.5,6.5 L8,12" fill="none" stroke="#444" stroke-width="2"/></svg>
<div class="a" style="left:360.5px;top:554px;width:49px;height:25px;background:#fff;border:1px solid #d6d6d6;border-radius:3px"></div>
<div class="a t" style="left:101.5px;width:300px;text-align:right;top:559.02px;font-size:11.5px;line-height:16px;color:#333;font-weight:400;">446</div>
<div class="a t" style="left:415px;top:559.08px;font-size:11.3px;line-height:16px;color:#333;font-weight:400;">of 447</div>
<svg class="a" style="left:456px;top:559px;" width="10" height="13" viewBox="0 0 10 13"><path d="M2,1 L7.5,6.5 L2,12" fill="none" stroke="#444" stroke-width="2"/></svg>
<svg class="a" style="left:476px;top:559px;" width="12" height="13" viewBox="0 0 12 13"><path d="M1.5,1 L7,6.5 L1.5,12" fill="none" stroke="#444" stroke-width="2"/><path d="M10.5,0.5 L10.5,12.5" stroke="#444" stroke-width="2"/></svg>
<div class="a" style="left:494px;top:553px;width:1px;height:25px;background:#d0d0d0"></div>
<div class="a t" style="left:515px;top:557.18px;font-size:11.6px;line-height:16px;color:#8a8a8a;font-weight:400;">Showing <b style="color:#555">30</b> of <b style="color:#555">13404</b> result(s) :: <b style="color:#555">6</b> selected</div>
<div class="a" style="left:301px;top:597px;width:835px;height:1px;background:#86bf55"></div>
<div class="a" style="left:301px;top:598px;width:835px;height:1px;background:#b2d492"></div>
<div class="a" style="left:301px;top:599px;width:835px;height:26px;background:#deebd2"></div>
<div class="a" style="left:301px;top:599px;width:130px;height:26px;background:#d4e0c7"></div>
<div class="a" style="left:431px;top:599px;width:1px;height:26px;border-left:1px dotted #b3bfa6"></div>
<div class="a" style="left:432px;top:599px;width:147px;height:26px;background:#d4e0c7"></div>
<div class="a" style="left:579px;top:599px;width:1px;height:26px;border-left:1px dotted #b3bfa6"></div>
<div class="a t" style="left:310px;top:603.32px;font-size:11.5px;line-height:16px;color:#444;font-weight:700;">Visualization</div>
<svg class="a" style="left:421px;top:617px;" width="5" height="5" viewBox="0 0 5 5"><path d="M5,0 L5,5 L0,5 Z" fill="#9aa88a"/></svg>
<div class="a t" style="left:442px;top:603.28px;font-size:11.6px;line-height:16px;color:#444;font-weight:700;">Document Date</div>
<svg class="a" style="left:569px;top:617px;" width="5" height="5" viewBox="0 0 5 5"><path d="M5,0 L5,5 L0,5 Z" fill="#9aa88a"/></svg>
<svg class="a" style="left:1095px;top:604px;" width="16" height="16" viewBox="0 0 16 16"><circle cx="8" cy="8" r="5.6" fill="#2e2e2e"/><circle cx="12.90" cy="10.03" r="2.3" fill="#2e2e2e"/><circle cx="10.03" cy="12.90" r="2.3" fill="#2e2e2e"/><circle cx="5.97" cy="12.90" r="2.3" fill="#2e2e2e"/><circle cx="3.10" cy="10.03" r="2.3" fill="#2e2e2e"/><circle cx="3.10" cy="5.97" r="2.3" fill="#2e2e2e"/><circle cx="5.97" cy="3.10" r="2.3" fill="#2e2e2e"/><circle cx="10.03" cy="3.10" r="2.3" fill="#2e2e2e"/><circle cx="12.90" cy="5.97" r="2.3" fill="#2e2e2e"/><circle cx="8" cy="8" r="1.9" fill="#deebd2"/></svg>
<div class="a" style="left:1120px;top:599px;width:15px;height:13px;background:#d4e0c7"></div>
<div class="a" style="left:1120px;top:612px;width:15px;height:13px;background:#d4e0c7"></div>
<svg class="a" style="left:1123px;top:601px;" width="8" height="6" viewBox="0 0 8 6"><path d="M1,5 L4,1.8 L7,5" fill="none" stroke="#808a78" stroke-width="1.4"/></svg>
<svg class="a" style="left:1123px;top:615px;" width="8" height="6" viewBox="0 0 8 6"><path d="M1,1 L4,4.2 L7,1" fill="none" stroke="#808a78" stroke-width="1.4"/></svg>
<div class="a t" style="left:322px;top:635.19px;font-size:11px;line-height:15px;color:#666;font-weight:400;">5k</div>
<div class="a t" style="left:322px;top:654.69px;font-size:11px;line-height:15px;color:#666;font-weight:400;">0k</div>
<div class="a" style="left:342px;top:639px;width:746px;height:1px;background:#d8d8d8"></div>
<div class="a" style="left:342px;top:660px;width:746px;height:1px;background:#b9cadb"></div>
<svg class="a" style="left:348px;top:660px;" width="740" height="6" viewBox="0 0 740 6"><rect x="0.00" y="0" width="1" height="5" fill="#bccbd9"/><rect x="7.45" y="0" width="1" height="5" fill="#bccbd9"/><rect x="14.90" y="0" width="1" height="5" fill="#bccbd9"/><rect x="22.35" y="0" width="1" height="5" fill="#bccbd9"/><rect x="29.80" y="0" width="1" height="5" fill="#bccbd9"/><rect x="37.25" y="0" width="1" height="5" fill="#bccbd9"/><rect x="44.70" y="0" width="1" height="5" fill="#bccbd9"/><rect x="52.15" y="0" width="1" height="5" fill="#bccbd9"/><rect x="59.60" y="0" width="1" height="5" fill="#bccbd9"/><rect x="67.05" y="0" width="1" height="5" fill="#bccbd9"/><rect x="74.50" y="0" width="1" height="5" fill="#bccbd9"/><rect x="81.95" y="0" width="1" height="5" fill="#bccbd9"/><rect x="89.40" y="0" width="1" height="5" fill="#bccbd9"/><rect x="96.85" y="0" width="1" height="5" fill="#bccbd9"/><rect x="104.30" y="0" width="1" height="5" fill="#bccbd9"/><rect x="111.75" y="0" width="1" height="5" fill="#bccbd9"/><rect x="119.20" y="0" width="1" height="5" fill="#bccbd9"/><rect x="126.65" y="0" width="1" height="5" fill="#bccbd9"/><rect x="134.10" y="0" width="1" height="5" fill="#bccbd9"/><rect x="141.55" y="0" width="1" height="5" fill="#bccbd9"/><rect x="149.00" y="0" width="1" height="5" fill="#bccbd9"/><rect x="156.45" y="0" width="1" height="5" fill="#bccbd9"/><rect x="163.90" y="0" width="1" height="5" fill="#bccbd9"/><rect x="171.35" y="0" width="1" height="5" fill="#bccbd9"/><rect x="178.80" y="0" width="1" height="5" fill="#bccbd9"/><rect x="186.25" y="0" width="1" height="5" fill="#bccbd9"/><rect x="193.70" y="0" width="1" height="5" fill="#bccbd9"/><rect x="201.15" y="0" width="1" height="5" fill="#bccbd9"/><rect x="208.60" y="0" width="1" height="5" fill="#bccbd9"/><rect x="216.05" y="0" width="1" height="5" fill="#bccbd9"/><rect x="223.50" y="0" width="1" height="5" fill="#bccbd9"/><rect x="230.95" y="0" width="1" height="5" fill="#bccbd9"/><rect x="238.40" y="0" width="1" height="5" fill="#bccbd9"/><rect x="245.85" y="0" width="1" height="5" fill="#bccbd9"/><rect x="253.30" y="0" width="1" height="5" fill="#bccbd9"/><rect x="260.75" y="0" width="1" height="5" fill="#bccbd9"/><rect x="268.20" y="0" width="1" height="5" fill="#bccbd9"/><rect x="275.65" y="0" width="1" height="5" fill="#bccbd9"/><rect x="283.10" y="0" width="1" height="5" fill="#bccbd9"/><rect x="290.55" y="0" width="1" height="5" fill="#bccbd9"/><rect x="298.00" y="0" width="1" height="5" fill="#bccbd9"/><rect x="305.45" y="0" width="1" height="5" fill="#bccbd9"/><rect x="312.90" y="0" width="1" height="5" fill="#bccbd9"/><rect x="320.35" y="0" width="1" height="5" fill="#bccbd9"/><rect x="327.80" y="0" width="1" height="5" fill="#bccbd9"/><rect x="335.25" y="0" width="1" height="5" fill="#bccbd9"/><rect x="342.70" y="0" width="1" height="5" fill="#bccbd9"/><rect x="350.15" y="0" width="1" height="5" fill="#bccbd9"/><rect x="357.60" y="0" width="1" height="5" fill="#bccbd9"/><rect x="365.05" y="0" width="1" height="5" fill="#bccbd9"/><rect x="372.50" y="0" width="1" height="5" fill="#bccbd9"/><rect x="379.95" y="0" width="1" height="5" fill="#bccbd9"/><rect x="387.40" y="0" width="1" height="5" fill="#bccbd9"/><rect x="394.85" y="0" width="1" height="5" fill="#bccbd9"/><rect x="402.30" y="0" width="1" height="5" fill="#bccbd9"/><rect x="409.75" y="0" width="1" height="5" fill="#bccbd9"/><rect x="417.20" y="0" width="1" height="5" fill="#bccbd9"/><rect x="424.65" y="0" width="1" height="5" fill="#bccbd9"/><rect x="432.10" y="0" width="1" height="5" fill="#bccbd9"/><rect x="439.55" y="0" width="1" height="5" fill="#bccbd9"/><rect x="447.00" y="0" width="1" height="5" fill="#bccbd9"/><rect x="454.45" y="0" width="1" height="5" fill="#bccbd9"/><rect x="461.90" y="0" width="1" height="5" fill="#bccbd9"/><rect x="469.35" y="0" width="1" height="5" fill="#bccbd9"/><rect x="476.80" y="0" width="1" height="5" fill="#bccbd9"/><rect x="484.25" y="0" width="1" height="5" fill="#bccbd9"/><rect x="491.70" y="0" width="1" height="5" fill="#bccbd9"/><rect x="499.15" y="0" width="1" height="5" fill="#bccbd9"/><rect x="506.60" y="0" width="1" height="5" fill="#bccbd9"/><rect x="514.05" y="0" width="1" height="5" fill="#bccbd9"/><rect x="521.50" y="0" width="1" height="5" fill="#bccbd9"/><rect x="528.95" y="0" width="1" height="5" fill="#bccbd9"/><rect x="536.40" y="0" width="1" height="5" fill="#bccbd9"/><rect x="543.85" y="0" width="1" height="5" fill="#bccbd9"/><rect x="551.30" y="0" width="1" height="5" fill="#bccbd9"/><rect x="558.75" y="0" width="1" height="5" fill="#bccbd9"/><rect x="566.20" y="0" width="1" height="5" fill="#bccbd9"/><rect x="573.65" y="0" width="1" height="5" fill="#bccbd9"/><rect x="581.10" y="0" width="1" height="5" fill="#bccbd9"/><rect x="588.55" y="0" width="1" height="5" fill="#bccbd9"/><rect x="596.00" y="0" width="1" height="5" fill="#bccbd9"/><rect x="603.45" y="0" width="1" height="5" fill="#bccbd9"/><rect x="610.90" y="0" width="1" height="5" fill="#bccbd9"/><rect x="618.35" y="0" width="1" height="5" fill="#bccbd9"/><rect x="625.80" y="0" width="1" height="5" fill="#bccbd9"/><rect x="633.25" y="0" width="1" height="5" fill="#bccbd9"/><rect x="640.70" y="0" width="1" height="5" fill="#bccbd9"/><rect x="648.15" y="0" width="1" height="5" fill="#bccbd9"/><rect x="655.60" y="0" width="1" height="5" fill="#bccbd9"/><rect x="663.05" y="0" width="1" height="5" fill="#bccbd9"/><rect x="670.50" y="0" width="1" height="5" fill="#bccbd9"/><rect x="677.95" y="0" width="1" height="5" fill="#bccbd9"/><rect x="685.40" y="0" width="1" height="5" fill="#bccbd9"/><rect x="692.85" y="0" width="1" height="5" fill="#bccbd9"/><rect x="700.30" y="0" width="1" height="5" fill="#bccbd9"/><rect x="707.75" y="0" width="1" height="5" fill="#bccbd9"/><rect x="715.20" y="0" width="1" height="5" fill="#bccbd9"/><rect x="722.65" y="0" width="1" height="5" fill="#bccbd9"/><rect x="730.10" y="0" width="1" height="5" fill="#bccbd9"/><rect x="737.55" y="0" width="1" height="5" fill="#bccbd9"/></svg>
<div class="a" style="left:845px;top:644px;width:7px;height:16px;background:#7aa8d2"></div>
<div class="a" style="left:852px;top:658px;width:7px;height:2px;background:#7aa8d2"></div>
<div class="a" style="left:860px;top:650px;width:7px;height:10px;background:#7aa8d2"></div>
<div class="a" style="left:867px;top:656px;width:7px;height:4px;background:#7aa8d2"></div>
<div class="a" style="left:882px;top:649px;width:7px;height:11px;background:#7aa8d2"></div>
<svg class="a" style="left:337px;top:652px;" width="10" height="17" viewBox="0 0 10 17"><rect x="0.8" y="0.8" width="8.4" height="15.4" rx="4" fill="#fff" stroke="#5b86b3" stroke-width="1.5"/><rect x="3" y="4" width="1" height="8.5" fill="#5b86b3"/><rect x="5" y="4" width="1" height="8.5" fill="#5b86b3"/></svg>
<svg class="a" style="left:1084px;top:652px;" width="10" height="17" viewBox="0 0 10 17"><rect x="0.8" y="0.8" width="8.4" height="15.4" rx="4" fill="#fff" stroke="#5b86b3" stroke-width="1.5"/><rect x="3" y="4" width="1" height="8.5" fill="#5b86b3"/><rect x="5" y="4" width="1" height="8.5" fill="#5b86b3"/></svg>
<div class="a t" style="left:349.0px;top:669.5px;font-size:11.5px;line-height:13px;color:#555;transform-origin:0 0;transform:rotate(45deg)">15/05/1999</div>
<div class="a t" style="left:400.8px;top:669.5px;font-size:11.5px;line-height:13px;color:#555;transform-origin:0 0;transform:rotate(45deg)">14/08/1999</div>
<div class="a t" style="left:452.6px;top:669.5px;font-size:11.5px;line-height:13px;color:#555;transform-origin:0 0;transform:rotate(45deg)">13/11/1999</div>
<div class="a t" style="left:504.4px;top:669.5px;font-size:11.5px;line-height:13px;color:#555;transform-origin:0 0;transform:rotate(45deg)">12/02/2000</div>
<div class="a t" style="left:556.2px;top:669.5px;font-size:11.5px;line-height:13px;color:#555;transform-origin:0 0;transform:rotate(45deg)">13/05/2000</div>
<div class="a t" style="left:608.0px;top:669.5px;font-size:11.5px;line-height:13px;color:#555;transform-origin:0 0;transform:rotate(45deg)">12/08/2000</div>
<div class="a t" style="left:659.8px;top:669.5px;font-size:11.5px;line-height:13px;color:#555;transform-origin:0 0;transform:rotate(45deg)">11/11/2000</div>
<div class="a t" style="left:711.6px;top:669.5px;font-size:11.5px;line-height:13px;color:#555;transform-origin:0 0;transform:rotate(45deg)">10/02/2001</div>
<div class="a t" style="left:763.4px;top:669.5px;font-size:11.5px;line-height:13px;color:#555;transform-origin:0 0;transform:rotate(45deg)">12/05/2001</div>
<div class="a t" style="left:815.2px;top:669.5px;font-size:11.5px;line-height:13px;color:#555;transform-origin:0 0;transform:rotate(45deg)">11/08/2001</div>
<div class="a t" style="left:867.0px;top:669.5px;font-size:11.5px;line-height:13px;color:#555;transform-origin:0 0;transform:rotate(45deg)">10/11/2001</div>
<div class="a t" style="left:918.8px;top:669.5px;font-size:11.5px;line-height:13px;color:#555;transform-origin:0 0;transform:rotate(45deg)">09/02/2002</div>
<div class="a t" style="left:970.6px;top:669.5px;font-size:11.5px;line-height:13px;color:#555;transform-origin:0 0;transform:rotate(45deg)">11/05/2002</div>
<div class="a t" style="left:1022.4px;top:669.5px;font-size:11.5px;line-height:13px;color:#555;transform-origin:0 0;transform:rotate(45deg)">10/08/2002</div>
<div class="a t" style="left:1074.2px;top:669.5px;font-size:11.5px;line-height:13px;color:#555;transform-origin:0 0;transform:rotate(45deg)">09/11/2002</div>
<div class="a" style="left:301px;top:726px;width:835px;height:1px;background:#444"></div>
<div class="a" style="left:0px;top:726px;width:47px;height:1px;background:#222"></div>
<div class="a" style="left:47px;top:726px;width:253px;height:1px;background:#444"></div>
<div class="a" style="left:1136px;top:38px;width:351px;height:35px;background:linear-gradient(#c20000,#c00000 28%,#8b0000 85%,#880000)"></div>
<div class="a" style="left:1136px;top:38px;width:158px;height:35px;background:linear-gradient(#c20000,#b40000 25%,#8c0000 80%,#880000)"></div>
<div class="a" style="left:1294px;top:38px;width:1px;height:35px;background:rgba(0,0,0,0.12)"></div>
<div class="a t" style="left:1145px;top:47.50px;font-size:13px;line-height:18px;color:#f3ead8;font-weight:700;">Bulk Tagging</div>
<div class="a" style="left:1487px;top:38px;width:31px;height:35px;background:#d64545"></div>
<svg class="a" style="left:1497px;top:50px;" width="11" height="13" viewBox="0 0 11 13"><rect x="0" y="0.5" width="11" height="2.4" fill="#5a2020"/><rect x="0" y="5.3" width="11" height="2.4" fill="#5a2020"/><rect x="0" y="10.1" width="11" height="2.4" fill="#5a2020"/></svg>
<div class="a rhdr" style="left:1518px;top:38px;width:18px;height:35px"></div>
<svg class="a" style="left:1522px;top:51px;" width="6" height="10" viewBox="0 0 6 10"><path d="M1,1 L5,5 L1,9" fill="none" stroke="#e07a7a" stroke-width="1.2"/></svg>
<div class="a rtb" style="left:1136px;top:73px;width:400px;height:29px;"></div>
<div class="a t" style="left:1148.5px;top:80.49px;font-size:11px;line-height:15px;color:#5a1c1c;font-weight:400;">Expand</div>
<div class="a" style="left:1198px;top:73px;width:1px;height:29px;background:#b83a3a"></div>
<div class="a t" style="left:1211.8px;top:80.49px;font-size:11px;line-height:15px;color:#5a1c1c;font-weight:400;">Collapse</div>
<div class="a" style="left:1268px;top:73px;width:1px;height:29px;background:#b83a3a"></div>
<div class="a" style="left:1136px;top:102px;width:400px;height:625px;background:#f6f6f6"></div>
<div class="a" style="left:1137px;top:102px;width:397px;height:27px;background:#fff;border-right:1px solid #d0d0d0;border-bottom:1px solid #cfcfcf;border-radius:0 0 3px 3px"></div>
<div class="a t" style="left:1145px;top:108.34px;font-size:12px;line-height:17px;color:#111;font-weight:700;">1st Level</div>
<svg class="a" style="left:1522px;top:115px;" width="11" height="11" viewBox="0 0 11 11"><path d="M11,0 L11,11 L0,11 Z" fill="#8a8a8a"/></svg>
<div class="a" style="left:1519px;top:129px;width:15px;height:473px;background:#f0f0f0"></div>
<svg class="a" style="left:1522px;top:134px;" width="10" height="7" viewBox="0 0 10 7"><path d="M1,6 L5,2 L9,6" fill="none" stroke="#444" stroke-width="1.6"/></svg>
<div class="a" style="left:1519px;top:146px;width:15px;height:434px;background:#c9c9c9"></div>
<svg class="a" style="left:1522px;top:591px;" width="10" height="7" viewBox="0 0 10 7"><path d="M1,1 L5,5 L9,1" fill="none" stroke="#444" stroke-width="1.6"/></svg>
<div class="a t" style="left:1151px;top:146.35px;font-size:14px;line-height:20px;color:#444;font-weight:700;">Responsiveness:</div>
<div class="a t" style="left:1274px;top:149.89px;font-size:11px;line-height:15px;color:#6b9ac8;font-weight:400;">1</div>
<svg class="a" style="left:1496px;top:155px;" width="8" height="5" viewBox="0 0 8 5"><path d="M0,0 L8,0 L4,4.5 Z" fill="#111"/></svg>
<div class="a" style="left:1151px;top:166px;width:352px;height:1px;background:#e4e4e4"></div>
<svg class="a" style="left:1166px;top:172px;" width="12" height="12" viewBox="0 0 12 12"><defs><linearGradient id="rg" x1="0" y1="0" x2="1" y2="1"><stop offset="0" stop-color="#fff"/><stop offset="1" stop-color="#ccc"/></linearGradient></defs><circle cx="6" cy="6" r="5.2" fill="#ddd" stroke="#444" stroke-width="1.3"/><circle cx="6" cy="6" r="2.6" fill="#6f9acb"/></svg>
<div class="a t" style="left:1183px;top:171.42px;font-size:11.5px;line-height:16px;color:#666;font-weight:400;">Responsive</div>
<svg class="a" style="left:1166px;top:188px;" width="12" height="12" viewBox="0 0 12 12"><defs><linearGradient id="rg" x1="0" y1="0" x2="1" y2="1"><stop offset="0" stop-color="#fff"/><stop offset="1" stop-color="#ccc"/></linearGradient></defs><circle cx="6" cy="6" r="5.2" fill="url(#rg)" stroke="#444" stroke-width="1.3"/></svg>
<div class="a t" style="left:1183px;top:187.42px;font-size:11.5px;line-height:16px;color:#666;font-weight:400;">Not responsive</div>
<div class="a t" style="left:1151px;top:216.85px;font-size:14px;line-height:20px;color:#444;font-weight:700;">Privilege:</div>
<div class="a t" style="left:1221.5px;top:220.39px;font-size:11px;line-height:15px;color:#6b9ac8;font-weight:400;">0</div>
<svg class="a" style="left:1496px;top:226px;" width="8" height="5" viewBox="0 0 8 5"><path d="M0,0 L8,0 L4,4.5 Z" fill="#111"/></svg>
<div class="a" style="left:1151px;top:237px;width:352px;height:1px;background:#e4e4e4"></div>
<div class="a" style="left:1166px;top:243px;width:13px;height:13px;border:1.3px solid #555;border-radius:2.5px;background:linear-gradient(135deg,#fff,#d6d6d6)"></div>
<div class="a t" style="left:1183px;top:242.32px;font-size:11.5px;line-height:16px;color:#666;font-weight:400;">Attorney Client</div>
<div class="a" style="left:1166px;top:259px;width:13px;height:13px;border:1.3px solid #555;border-radius:2.5px;background:linear-gradient(135deg,#fff,#d6d6d6)"></div>
<div class="a t" style="left:1183px;top:258.32px;font-size:11.5px;line-height:16px;color:#666;font-weight:400;">Work Product</div>
<div class="a t" style="left:1151px;top:287.65px;font-size:14px;line-height:20px;color:#444;font-weight:700;">Issues:</div>
<div class="a t" style="left:1207.5px;top:291.19px;font-size:11px;line-height:15px;color:#6b9ac8;font-weight:400;">1</div>
<svg class="a" style="left:1496px;top:296px;" width="8" height="5" viewBox="0 0 8 5"><path d="M0,0 L8,0 L4,4.5 Z" fill="#111"/></svg>
<div class="a" style="left:1151px;top:308px;width:352px;height:1px;background:#e4e4e4"></div>
<div class="a" style="left:1166px;top:314px;width:13px;height:13px;border:1.3px solid #555;border-radius:2.5px;background:linear-gradient(135deg,#fff,#d6d6d6)"></div>
<div class="a t" style="left:1183px;top:313.02px;font-size:11.5px;line-height:16px;color:#666;font-weight:400;">Price Fixing</div>
<div class="a" style="left:1166px;top:330px;width:13px;height:13px;border:1.3px solid #555;border-radius:2.5px;background:linear-gradient(135deg,#fff,#d6d6d6)"></div>
<div class="a t" style="left:1183px;top:329.02px;font-size:11.5px;line-height:16px;color:#666;font-weight:400;">Money Laundering</div>
<div class="a" style="left:1166px;top:346px;width:13px;height:13px;border:1.3px solid #555;border-radius:2.5px;background:linear-gradient(135deg,#fff,#d6d6d6)"></div>
<div class="a t" style="left:1183px;top:345.02px;font-size:11.5px;line-height:16px;color:#666;font-weight:400;">Fraud</div>
<div class="a" style="left:1166px;top:362px;width:13px;height:13px;border:1.3px solid #555;border-radius:2.5px;background:linear-gradient(135deg,#fff,#d6d6d6)"></div>
<svg class="a" style="left:1168px;top:364px;" width="10" height="10" viewBox="0 0 10 10"><path d="M1,5 L3.8,8 L8.5,1.5" fill="none" stroke="#3a6aa8" stroke-width="1.6"/></svg>
<div class="a t" style="left:1183px;top:361.02px;font-size:11.5px;line-height:16px;color:#666;font-weight:400;">Football</div>
<div class="a" style="left:1166px;top:378px;width:13px;height:13px;border:1.3px solid #555;border-radius:2.5px;background:linear-gradient(135deg,#fff,#d6d6d6)"></div>
<div class="a t" style="left:1183px;top:377.02px;font-size:11.5px;line-height:16px;color:#666;font-weight:400;">Foreign Language</div>
<div class="a" style="left:1166px;top:394px;width:13px;height:13px;border:1.3px solid #555;border-radius:2.5px;background:linear-gradient(135deg,#fff,#d6d6d6)"></div>
<div class="a t" style="left:1183px;top:393.02px;font-size:11.5px;line-height:16px;color:#666;font-weight:400;">Spam</div>
<div class="a t" style="left:1151px;top:421.95px;font-size:14px;line-height:20px;color:#444;font-weight:700;">Review Comment</div>
<svg class="a" style="left:1496px;top:431px;" width="8" height="5" viewBox="0 0 8 5"><path d="M0,0 L8,0 L4,4.5 Z" fill="#111"/></svg>
<div class="a" style="left:1151px;top:442px;width:352px;height:1px;background:#e4e4e4"></div>
<div class="a" style="left:1167.5px;top:448px;width:335px;height:59px;background:#fff;border:1px solid #c8c8c8;border-top-color:#aaa;border-radius:2px"></div>
<svg class="a" style="left:1490px;top:495px;" width="9" height="9" viewBox="0 0 9 9"><rect x="6" y="0" width="2" height="2" fill="#999"/><rect x="3" y="3" width="2" height="2" fill="#999"/><rect x="6" y="3" width="2" height="2" fill="#999"/><rect x="0" y="6" width="2" height="2" fill="#999"/><rect x="3" y="6" width="2" height="2" fill="#999"/><rect x="6" y="6" width="2" height="2" fill="#999"/></svg>
<div class="a t" style="left:1151px;top:519.45px;font-size:14px;line-height:20px;color:#444;font-weight:700;">Review State:</div>
<div class="a t" style="left:1250.5px;top:522.99px;font-size:11px;line-height:15px;color:#6b9ac8;font-weight:400;">0</div>
<svg class="a" style="left:1496px;top:528px;" width="8" height="5" viewBox="0 0 8 5"><path d="M0,0 L8,0 L4,4.5 Z" fill="#111"/></svg>
<div class="a" style="left:1151px;top:539px;width:352px;height:1px;background:#e4e4e4"></div>
<div class="a" style="left:1166px;top:545.2px;width:13px;height:13px;border:1.3px solid #555;border-radius:2.5px;background:linear-gradient(135deg,#fff,#d6d6d6)"></div>
<div class="a t" style="left:1183px;top:545.22px;font-size:11.5px;line-height:16px;color:#666;font-weight:400;">First Pass Review Complete</div>
<div class="a" style="left:1166px;top:561.2px;width:13px;height:13px;border:1.3px solid #555;border-radius:2.5px;background:linear-gradient(135deg,#fff,#d6d6d6)"></div>
<div class="a t" style="left:1183px;top:561.22px;font-size:11.5px;line-height:16px;color:#666;font-weight:400;">Fully Reviewed</div>
<div class="a" style="left:1166px;top:577.2px;width:13px;height:13px;border:1.3px solid #555;border-radius:2.5px;background:linear-gradient(135deg,#fff,#d6d6d6)"></div>
<div class="a t" style="left:1183px;top:577.22px;font-size:11.5px;line-height:16px;color:#666;font-weight:400;">Second Pass Review Complete</div>
<div class="a" style="left:1136px;top:602px;width:383px;height:1px;border-top:1px dotted #cfcfcf"></div>
<div class="a" style="left:1453px;top:613.5px;width:67px;height:24px;background:linear-gradient(#676767,#4a4a4a 50%,#404040);box-shadow:1px 1px 2px rgba(0,0,0,.45)"></div>
<div class="a" style="left:1453px;top:613.5px;width:9px;height:24px;background:#b00000"></div>
<div class="a t" style="left:1455.5px;top:618.19px;font-size:11px;line-height:15px;color:#f0f0f0;font-weight:400;">!</div>
<div class="a t" style="left:1472.5px;top:616.84px;font-size:12px;line-height:17px;color:#fff;font-weight:700;">Save</div>
<div class="a" style="left:1136px;top:648px;width:400px;height:1px;background:#86bf55"></div>
<div class="a" style="left:1136px;top:649px;width:400px;height:1px;background:#b2d492"></div>
<div class="a" style="left:1136px;top:650px;width:400px;height:28px;background:#deebd2"></div>
<div class="a t" style="left:1146px;top:654.92px;font-size:11.5px;line-height:16px;color:#444;font-weight:700;">Quick Tags (hotkey: Ctrl + #)</div>
<div class="a" style="left:1136px;top:678px;width:400px;height:48px;background:#fff"></div>
<div class="a" style="left:1142.5px;top:684.5px;width:25.5px;height:40.5px;border-radius:4px;background:linear-gradient(#c6c6c6,#b4b4b4);box-shadow:0 1px 1px rgba(0,0,0,.12)"></div>
<div class="a t" style="left:1146.3px;top:685.11px;font-size:17px;line-height:24px;color:rgba(245,245,245,.85);font-weight:400;">1</div>
<div class="a" style="left:1175.5px;top:684.5px;width:25.5px;height:40.5px;border-radius:4px;background:linear-gradient(#c6c6c6,#b4b4b4);box-shadow:0 1px 1px rgba(0,0,0,.12)"></div>
<div class="a t" style="left:1179.3px;top:685.11px;font-size:17px;line-height:24px;color:rgba(245,245,245,.85);font-weight:400;">2</div>
<div class="a" style="left:1208.5px;top:684.5px;width:25.5px;height:40.5px;border-radius:4px;background:linear-gradient(#c6c6c6,#b4b4b4);box-shadow:0 1px 1px rgba(0,0,0,.12)"></div>
<div class="a t" style="left:1212.3px;top:685.11px;font-size:17px;line-height:24px;color:rgba(245,245,245,.85);font-weight:400;">3</div>
<div class="a" style="left:1241.5px;top:684.5px;width:25.5px;height:40.5px;border-radius:4px;background:linear-gradient(#c6c6c6,#b4b4b4);box-shadow:0 1px 1px rgba(0,0,0,.12)"></div>
<div class="a t" style="left:1245.3px;top:685.11px;font-size:17px;line-height:24px;color:rgba(245,245,245,.85);font-weight:400;">4</div>
<div class="a" style="left:1274.5px;top:684.5px;width:25.5px;height:40.5px;border-radius:4px;background:linear-gradient(#c6c6c6,#b4b4b4);box-shadow:0 1px 1px rgba(0,0,0,.12)"></div>
<div class="a t" style="left:1278.3px;top:685.11px;font-size:17px;line-height:24px;color:rgba(245,245,245,.85);font-weight:400;">5</div>
<div class="a" style="left:1307.5px;top:684.5px;width:25.5px;height:40.5px;border-radius:4px;background:linear-gradient(#c6c6c6,#b4b4b4);box-shadow:0 1px 1px rgba(0,0,0,.12)"></div>
<div class="a t" style="left:1311.3px;top:685.11px;font-size:17px;line-height:24px;color:rgba(245,245,245,.85);font-weight:400;">6</div>
<div class="a" style="left:1340.5px;top:684.5px;width:25.5px;height:40.5px;border-radius:4px;background:linear-gradient(#c6c6c6,#b4b4b4);box-shadow:0 1px 1px rgba(0,0,0,.12)"></div>
<div class="a t" style="left:1344.3px;top:685.11px;font-size:17px;line-height:24px;color:rgba(245,245,245,.85);font-weight:400;">7</div>
<div class="a" style="left:1373.5px;top:684.5px;width:25.5px;height:40.5px;border-radius:4px;background:linear-gradient(#c6c6c6,#b4b4b4);box-shadow:0 1px 1px rgba(0,0,0,.12)"></div>
<div class="a t" style="left:1377.3px;top:685.11px;font-size:17px;line-height:24px;color:rgba(245,245,245,.85);font-weight:400;">8</div>
<div class="a" style="left:1406.5px;top:684.5px;width:25.5px;height:40.5px;border-radius:4px;background:linear-gradient(#c6c6c6,#b4b4b4);box-shadow:0 1px 1px rgba(0,0,0,.12)"></div>
<div class="a t" style="left:1410.3px;top:685.11px;font-size:17px;line-height:24px;color:rgba(245,245,245,.85);font-weight:400;">L</div>
<div class="a" style="left:1439.5px;top:684.5px;width:25.5px;height:40.5px;border-radius:4px;background:linear-gradient(#c6c6c6,#b4b4b4);box-shadow:0 1px 1px rgba(0,0,0,.12)"></div>
<div class="a t" style="left:1443.3px;top:685.11px;font-size:17px;line-height:24px;color:rgba(245,245,245,.85);font-weight:400;">U</div>
<div class="a" style="left:1136px;top:102px;width:1px;height:625px;background:#d0d0d0"></div>
<div class="a" style="left:1534px;top:102px;width:2px;height:625px;background:#d9d9d9"></div>
<div class="a" style="left:1136px;top:726px;width:400px;height:1px;background:#444"></div>
<div class="a" style="left:0px;top:102px;width:300px;height:3px;background:linear-gradient(rgba(0,0,0,0.5),rgba(0,0,0,0.175) 50%,rgba(0,0,0,0))"></div>
<div class="a" style="left:301px;top:102px;width:835px;height:3px;background:linear-gradient(rgba(0,0,0,0.5),rgba(0,0,0,0.175) 50%,rgba(0,0,0,0))"></div>
<div class="a" style="left:1136px;top:102px;width:400px;height:3px;background:linear-gradient(rgba(0,0,0,0.5),rgba(0,0,0,0.175) 50%,rgba(0,0,0,0))"></div>
<div class="a" style="left:0px;top:470px;width:300px;height:3px;background:linear-gradient(rgba(0,0,0,0.25),rgba(0,0,0,0.0875) 50%,rgba(0,0,0,0))"></div>
<div class="a" style="left:301px;top:625px;width:835px;height:3px;background:linear-gradient(rgba(0,0,0,0.25),rgba(0,0,0,0.0875) 50%,rgba(0,0,0,0))"></div>
<div class="a" style="left:1136px;top:678px;width:400px;height:3px;background:linear-gradient(rgba(0,0,0,0.22),rgba(0,0,0,0.077) 50%,rgba(0,0,0,0))"></div>
</body></html>
